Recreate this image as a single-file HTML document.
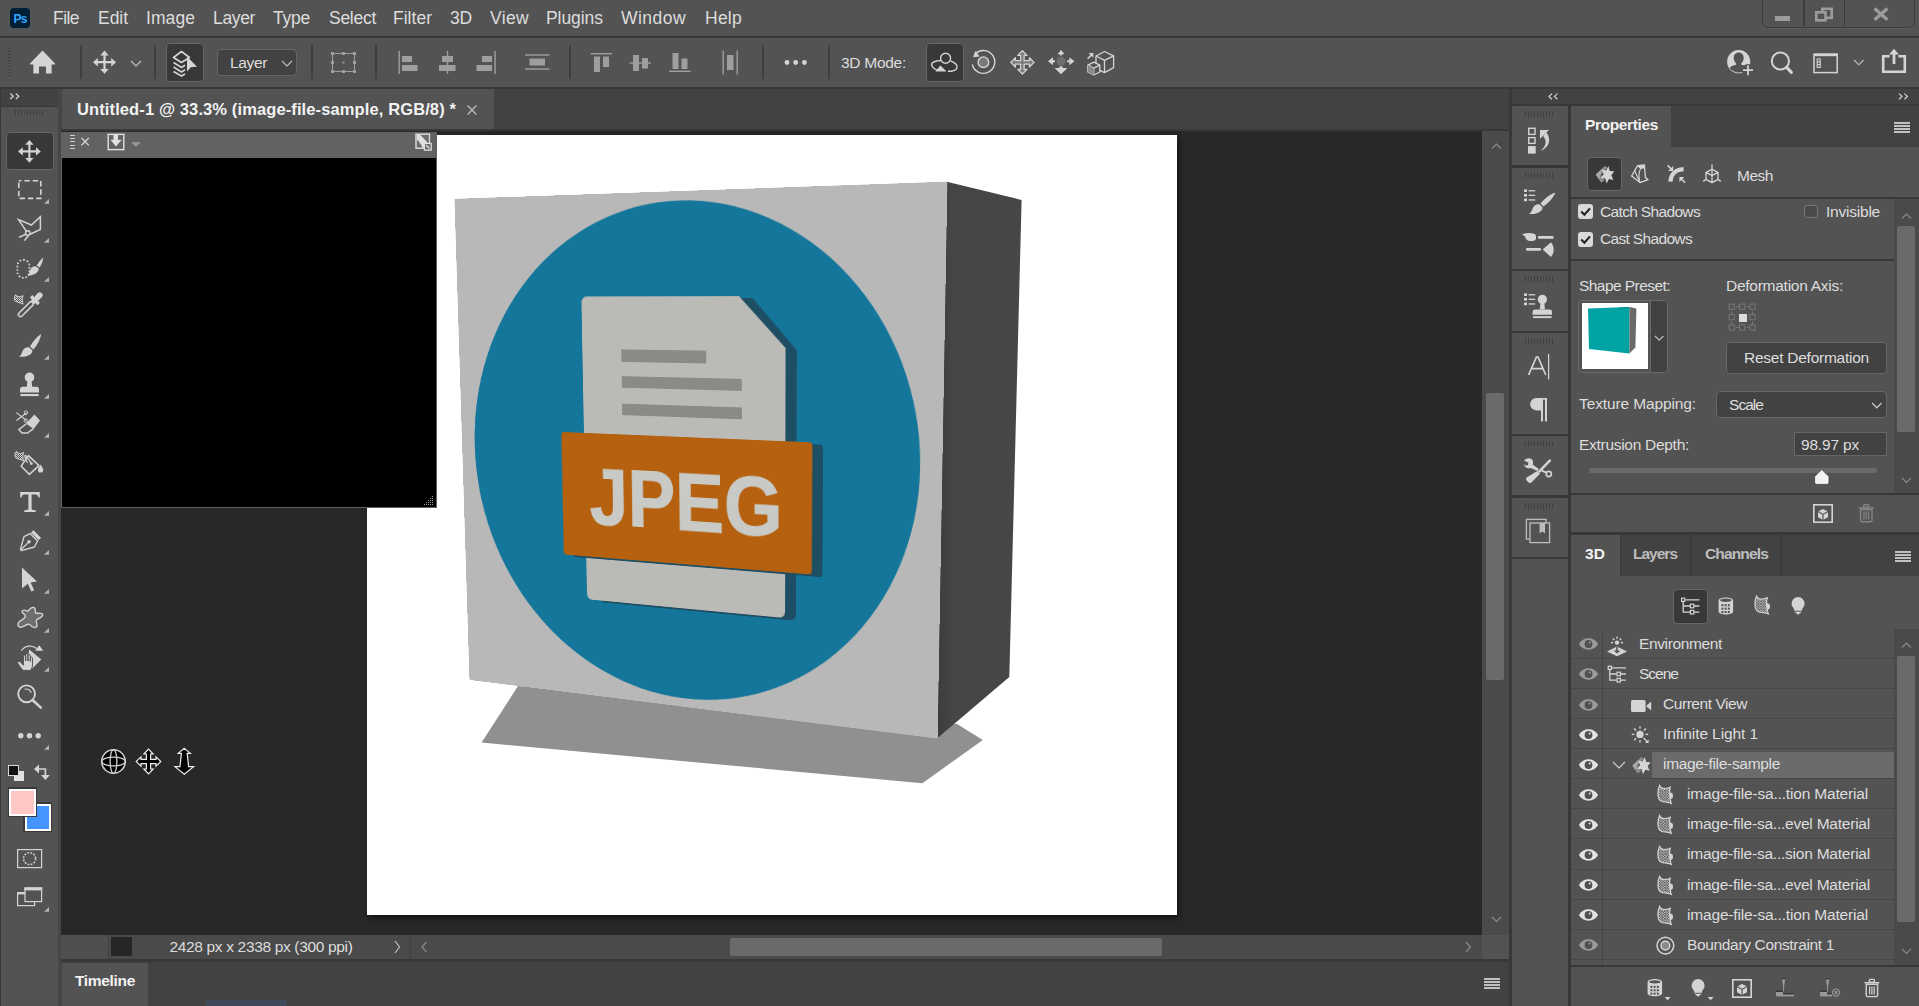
<!DOCTYPE html>
<html lang="en"><head><meta charset="utf-8"><title>Untitled-1 @ 33.3% (image-file-sample, RGB/8) *</title>
<style>
html,body{margin:0;padding:0;background:#535353;overflow:hidden;}
#app{position:relative;width:1919px;height:1006px;overflow:hidden;background:#535353;font-family:"Liberation Sans", sans-serif;}
#app div,#app svg,#app .t{position:absolute;}
#app .t{white-space:pre;}
</style></head><body><div id="app">
<div style="left:0px;top:0px;width:1919px;height:36px;background:#535353;"></div>
<div style="left:0px;top:36px;width:1919px;height:2px;background:#383838;"></div>
<div style="left:10px;top:8px;width:20px;height:20px;background:#001e36;border-radius:4px;"></div>
<span id="t0" class="t" style="left:13.5px;top:12.84px;font-size:12px;line-height:12px;color:#31a8ff;font-weight:700;letter-spacing:-0.844px;">Ps</span>
<span id="t1" class="t" style="left:53px;top:10.19px;font-size:17.5px;line-height:17.5px;color:#dddddd;font-weight:400;letter-spacing:-0.551px;">File</span>
<span id="t2" class="t" style="left:98px;top:10.19px;font-size:17.5px;line-height:17.5px;color:#dddddd;font-weight:400;letter-spacing:-0.039px;">Edit</span>
<span id="t3" class="t" style="left:146px;top:10.19px;font-size:17.5px;line-height:17.5px;color:#dddddd;font-weight:400;letter-spacing:0.072px;">Image</span>
<span id="t4" class="t" style="left:213px;top:10.19px;font-size:17.5px;line-height:17.5px;color:#dddddd;font-weight:400;letter-spacing:-0.356px;">Layer</span>
<span id="t5" class="t" style="left:273px;top:10.19px;font-size:17.5px;line-height:17.5px;color:#dddddd;font-weight:400;letter-spacing:-0.238px;">Type</span>
<span id="t6" class="t" style="left:329px;top:10.19px;font-size:17.5px;line-height:17.5px;color:#dddddd;font-weight:400;letter-spacing:-0.273px;">Select</span>
<span id="t7" class="t" style="left:393px;top:10.19px;font-size:17.5px;line-height:17.5px;color:#dddddd;font-weight:400;letter-spacing:0.018px;">Filter</span>
<span id="t8" class="t" style="left:450px;top:10.19px;font-size:17.5px;line-height:17.5px;color:#dddddd;font-weight:400;letter-spacing:-0.188px;">3D</span>
<span id="t9" class="t" style="left:490px;top:10.19px;font-size:17.5px;line-height:17.5px;color:#dddddd;font-weight:400;letter-spacing:0.344px;">View</span>
<span id="t10" class="t" style="left:546px;top:10.19px;font-size:17.5px;line-height:17.5px;color:#dddddd;font-weight:400;letter-spacing:-0.058px;">Plugins</span>
<span id="t11" class="t" style="left:621px;top:10.19px;font-size:17.5px;line-height:17.5px;color:#dddddd;font-weight:400;letter-spacing:0.458px;">Window</span>
<span id="t12" class="t" style="left:705px;top:10.19px;font-size:17.5px;line-height:17.5px;color:#dddddd;font-weight:400;letter-spacing:0.250px;">Help</span>
<div style="left:1761.5px;top:-3px;width:153.5px;height:30.5px;background:#535353;border:1.5px solid #3c3c3c;border-radius:0 0 6px 6px;box-sizing:border-box;box-shadow:0 1px 0 #5c5c5c;"></div>
<div style="left:1803px;top:0px;width:1.5px;height:26px;background:#3c3c3c;"></div>
<div style="left:1843.5px;top:0px;width:1.5px;height:26px;background:#3c3c3c;"></div>
<div style="left:1775px;top:16px;width:15.2px;height:5px;background:#9c9c9c;"></div>
<svg style="left:1813px;top:5px;" width="22" height="18" viewBox="0 0 22 18"><rect x="9.3" y="3.8" width="9.4" height="9" fill="none" stroke="#9c9c9c" stroke-width="2.6"/><rect x="3.3" y="7.3" width="9.2" height="8" fill="#535353" stroke="#9c9c9c" stroke-width="2.6"/></svg>
<svg style="left:1871px;top:5px;" width="20" height="18" viewBox="0 0 20 18"><path d="M3.6 3.4 L16.4 14.8 M16.4 3.4 L3.6 14.8" stroke="#9c9c9c" stroke-width="3.3" fill="none"/></svg>
<div style="left:0px;top:38px;width:1919px;height:49px;background:#535353;"></div>
<div style="left:0px;top:87px;width:1919px;height:2px;background:#383838;"></div>
<div style="left:8px;top:48px;width:3px;height:1px;background:#444444;"></div>
<div style="left:8px;top:51px;width:3px;height:1px;background:#444444;"></div>
<div style="left:8px;top:54px;width:3px;height:1px;background:#444444;"></div>
<div style="left:8px;top:57px;width:3px;height:1px;background:#444444;"></div>
<div style="left:8px;top:60px;width:3px;height:1px;background:#444444;"></div>
<div style="left:8px;top:63px;width:3px;height:1px;background:#444444;"></div>
<div style="left:8px;top:66px;width:3px;height:1px;background:#444444;"></div>
<div style="left:8px;top:69px;width:3px;height:1px;background:#444444;"></div>
<div style="left:8px;top:72px;width:3px;height:1px;background:#444444;"></div>
<div style="left:8px;top:75px;width:3px;height:1px;background:#444444;"></div>
<div style="left:80px;top:45px;width:2px;height:34px;background:#3e3e3e;"></div>
<div style="left:154px;top:45px;width:2px;height:34px;background:#3e3e3e;"></div>
<div style="left:311px;top:45px;width:2px;height:34px;background:#3e3e3e;"></div>
<div style="left:375px;top:45px;width:2px;height:34px;background:#3e3e3e;"></div>
<div style="left:569px;top:45px;width:2px;height:34px;background:#3e3e3e;"></div>
<div style="left:762px;top:45px;width:2px;height:34px;background:#3e3e3e;"></div>
<div style="left:828px;top:45px;width:2px;height:34px;background:#3e3e3e;"></div>
<div style="left:166px;top:43px;width:38px;height:39px;background:#383838;border:1px solid #666;border-radius:4px;box-sizing:border-box;"></div>
<div style="left:217px;top:49px;width:80px;height:27px;background:#424242;border:1px solid #666;border-radius:4px;box-sizing:border-box;"></div>
<span id="t13" class="t" style="left:230px;top:54.88px;font-size:15.5px;line-height:15.5px;color:#dddddd;font-weight:400;letter-spacing:-0.356px;">Layer</span>
<span id="t14" class="t" style="left:841px;top:54.88px;font-size:15.5px;line-height:15.5px;color:#dddddd;font-weight:400;letter-spacing:-0.275px;">3D Mode:</span>
<div style="left:926px;top:43px;width:38px;height:39px;background:#383838;border:1px solid #666;border-radius:4px;box-sizing:border-box;"></div>
<div style="left:0px;top:89px;width:61px;height:917px;background:#383838;"></div>
<div style="left:58px;top:89px;width:3px;height:917px;background:#474747;"></div>
<div style="left:1px;top:89px;width:57px;height:17px;background:#424242;"></div>
<div style="left:1px;top:107px;width:57px;height:899px;background:#535353;"></div>
<div style="left:15px;top:110px;width:1px;height:5.4px;background:#404040;"></div>
<div style="left:18px;top:110px;width:1px;height:5.4px;background:#404040;"></div>
<div style="left:21px;top:110px;width:1px;height:5.4px;background:#404040;"></div>
<div style="left:24px;top:110px;width:1px;height:5.4px;background:#404040;"></div>
<div style="left:27px;top:110px;width:1px;height:5.4px;background:#404040;"></div>
<div style="left:30px;top:110px;width:1px;height:5.4px;background:#404040;"></div>
<div style="left:33px;top:110px;width:1px;height:5.4px;background:#404040;"></div>
<div style="left:36px;top:110px;width:1px;height:5.4px;background:#404040;"></div>
<div style="left:39px;top:110px;width:1px;height:5.4px;background:#404040;"></div>
<div style="left:42px;top:110px;width:1px;height:5.4px;background:#404040;"></div>
<div style="left:6px;top:132px;width:48px;height:38px;background:#383838;border:1px solid #666;border-radius:4px;box-sizing:border-box;"></div>
<div style="left:61px;top:89px;width:1448px;height:42px;background:#424242;"></div>
<div style="left:61px;top:129px;width:1448px;height:2px;background:#383838;"></div>
<div style="left:62px;top:89px;width:432px;height:40px;background:#535353;"></div>
<span id="t15" class="t" style="left:77px;top:101.23px;font-size:16.5px;line-height:16.5px;color:#f2f2f2;font-weight:700;letter-spacing:0.113px;">Untitled-1 @ 33.3% (image-file-sample, RGB/8) *</span>
<div style="left:61px;top:131px;width:1421px;height:804px;background:#282828;"></div>
<div style="left:367px;top:135px;width:810px;height:780px;background:#ffffff;box-shadow:2px 3px 6px rgba(0,0,0,.55);"></div>
<div style="left:1482px;top:131px;width:27px;height:804px;background:#4a4a4a;"></div>
<div style="left:1486px;top:393px;width:18px;height:287px;background:#6a6a6a;border-radius:2px;"></div>
<div style="left:61px;top:935px;width:1448px;height:24px;background:#4a4a4a;"></div>
<div style="left:61px;top:935px;width:47px;height:24px;background:#4f4f4f;"></div>
<div style="left:108px;top:935px;width:1px;height:24px;background:#424242;"></div>
<div style="left:111px;top:937px;width:21px;height:19px;background:#262626;"></div>
<span id="t16" class="t" style="left:169.5px;top:938.88px;font-size:15.5px;line-height:15.5px;color:#dddddd;font-weight:400;letter-spacing:-0.340px;">2428 px x 2338 px (300 ppi)</span>
<div style="left:410px;top:935px;width:1px;height:24px;background:#424242;"></div>
<div style="left:730px;top:938px;width:432px;height:18px;background:#6a6a6a;border-radius:2px;"></div>
<div style="left:1482px;top:935px;width:27px;height:24px;background:#535353;"></div>
<div style="left:61px;top:959px;width:1448px;height:3px;background:#383838;"></div>
<div style="left:61px;top:962px;width:1448px;height:44px;background:#424242;"></div>
<div style="left:62px;top:963px;width:86px;height:43px;background:#535353;"></div>
<span id="t17" class="t" style="left:75px;top:972.88px;font-size:15.5px;line-height:15.5px;color:#f2f2f2;font-weight:700;letter-spacing:-0.326px;">Timeline</span>
<div style="left:206px;top:1000px;width:81px;height:6px;background:#3f4a5a;"></div>
<div style="left:1484px;top:978px;width:16px;height:2px;background:#c0c0c0;"></div>
<div style="left:1484px;top:981px;width:16px;height:2px;background:#c0c0c0;"></div>
<div style="left:1484px;top:984px;width:16px;height:2px;background:#c0c0c0;"></div>
<div style="left:1484px;top:987px;width:16px;height:2px;background:#c0c0c0;"></div>
<div style="left:61px;top:131.5px;width:376px;height:376.5px;background:#626262;"></div>
<div style="left:62px;top:157.5px;width:374px;height:349.5px;background:#000000;"></div>
<div style="left:1509px;top:89px;width:3px;height:917px;background:#383838;"></div>
<div style="left:1512px;top:89px;width:407px;height:15px;background:#424242;"></div>
<div style="left:1512px;top:104px;width:407px;height:2px;background:#383838;"></div>
<div style="left:1512px;top:106px;width:56px;height:900px;background:#535353;"></div>
<div style="left:1512px;top:165.4px;width:56px;height:2.4000000000000057px;background:#383838;"></div>
<div style="left:1512px;top:269px;width:56px;height:2.1999999999999886px;background:#383838;"></div>
<div style="left:1512px;top:331px;width:56px;height:2.1999999999999886px;background:#383838;"></div>
<div style="left:1512px;top:434.2px;width:56px;height:2.1999999999999886px;background:#383838;"></div>
<div style="left:1512px;top:495.4px;width:56px;height:2.2000000000000455px;background:#383838;"></div>
<div style="left:1512px;top:557px;width:56px;height:2.2000000000000455px;background:#383838;"></div>
<div style="left:1525px;top:111.2px;width:1px;height:5.4px;background:#404040;"></div>
<div style="left:1528px;top:111.2px;width:1px;height:5.4px;background:#404040;"></div>
<div style="left:1531px;top:111.2px;width:1px;height:5.4px;background:#404040;"></div>
<div style="left:1534px;top:111.2px;width:1px;height:5.4px;background:#404040;"></div>
<div style="left:1537px;top:111.2px;width:1px;height:5.4px;background:#404040;"></div>
<div style="left:1540px;top:111.2px;width:1px;height:5.4px;background:#404040;"></div>
<div style="left:1543px;top:111.2px;width:1px;height:5.4px;background:#404040;"></div>
<div style="left:1546px;top:111.2px;width:1px;height:5.4px;background:#404040;"></div>
<div style="left:1549px;top:111.2px;width:1px;height:5.4px;background:#404040;"></div>
<div style="left:1552px;top:111.2px;width:1px;height:5.4px;background:#404040;"></div>
<div style="left:1525px;top:173px;width:1px;height:5.4px;background:#404040;"></div>
<div style="left:1528px;top:173px;width:1px;height:5.4px;background:#404040;"></div>
<div style="left:1531px;top:173px;width:1px;height:5.4px;background:#404040;"></div>
<div style="left:1534px;top:173px;width:1px;height:5.4px;background:#404040;"></div>
<div style="left:1537px;top:173px;width:1px;height:5.4px;background:#404040;"></div>
<div style="left:1540px;top:173px;width:1px;height:5.4px;background:#404040;"></div>
<div style="left:1543px;top:173px;width:1px;height:5.4px;background:#404040;"></div>
<div style="left:1546px;top:173px;width:1px;height:5.4px;background:#404040;"></div>
<div style="left:1549px;top:173px;width:1px;height:5.4px;background:#404040;"></div>
<div style="left:1552px;top:173px;width:1px;height:5.4px;background:#404040;"></div>
<div style="left:1525px;top:276.2px;width:1px;height:5.4px;background:#404040;"></div>
<div style="left:1528px;top:276.2px;width:1px;height:5.4px;background:#404040;"></div>
<div style="left:1531px;top:276.2px;width:1px;height:5.4px;background:#404040;"></div>
<div style="left:1534px;top:276.2px;width:1px;height:5.4px;background:#404040;"></div>
<div style="left:1537px;top:276.2px;width:1px;height:5.4px;background:#404040;"></div>
<div style="left:1540px;top:276.2px;width:1px;height:5.4px;background:#404040;"></div>
<div style="left:1543px;top:276.2px;width:1px;height:5.4px;background:#404040;"></div>
<div style="left:1546px;top:276.2px;width:1px;height:5.4px;background:#404040;"></div>
<div style="left:1549px;top:276.2px;width:1px;height:5.4px;background:#404040;"></div>
<div style="left:1552px;top:276.2px;width:1px;height:5.4px;background:#404040;"></div>
<div style="left:1525px;top:338.4px;width:1px;height:5.4px;background:#404040;"></div>
<div style="left:1528px;top:338.4px;width:1px;height:5.4px;background:#404040;"></div>
<div style="left:1531px;top:338.4px;width:1px;height:5.4px;background:#404040;"></div>
<div style="left:1534px;top:338.4px;width:1px;height:5.4px;background:#404040;"></div>
<div style="left:1537px;top:338.4px;width:1px;height:5.4px;background:#404040;"></div>
<div style="left:1540px;top:338.4px;width:1px;height:5.4px;background:#404040;"></div>
<div style="left:1543px;top:338.4px;width:1px;height:5.4px;background:#404040;"></div>
<div style="left:1546px;top:338.4px;width:1px;height:5.4px;background:#404040;"></div>
<div style="left:1549px;top:338.4px;width:1px;height:5.4px;background:#404040;"></div>
<div style="left:1552px;top:338.4px;width:1px;height:5.4px;background:#404040;"></div>
<div style="left:1525px;top:441px;width:1px;height:5.4px;background:#404040;"></div>
<div style="left:1528px;top:441px;width:1px;height:5.4px;background:#404040;"></div>
<div style="left:1531px;top:441px;width:1px;height:5.4px;background:#404040;"></div>
<div style="left:1534px;top:441px;width:1px;height:5.4px;background:#404040;"></div>
<div style="left:1537px;top:441px;width:1px;height:5.4px;background:#404040;"></div>
<div style="left:1540px;top:441px;width:1px;height:5.4px;background:#404040;"></div>
<div style="left:1543px;top:441px;width:1px;height:5.4px;background:#404040;"></div>
<div style="left:1546px;top:441px;width:1px;height:5.4px;background:#404040;"></div>
<div style="left:1549px;top:441px;width:1px;height:5.4px;background:#404040;"></div>
<div style="left:1552px;top:441px;width:1px;height:5.4px;background:#404040;"></div>
<div style="left:1525px;top:503.2px;width:1px;height:5.4px;background:#404040;"></div>
<div style="left:1528px;top:503.2px;width:1px;height:5.4px;background:#404040;"></div>
<div style="left:1531px;top:503.2px;width:1px;height:5.4px;background:#404040;"></div>
<div style="left:1534px;top:503.2px;width:1px;height:5.4px;background:#404040;"></div>
<div style="left:1537px;top:503.2px;width:1px;height:5.4px;background:#404040;"></div>
<div style="left:1540px;top:503.2px;width:1px;height:5.4px;background:#404040;"></div>
<div style="left:1543px;top:503.2px;width:1px;height:5.4px;background:#404040;"></div>
<div style="left:1546px;top:503.2px;width:1px;height:5.4px;background:#404040;"></div>
<div style="left:1549px;top:503.2px;width:1px;height:5.4px;background:#404040;"></div>
<div style="left:1552px;top:503.2px;width:1px;height:5.4px;background:#404040;"></div>
<div style="left:1568px;top:104px;width:3px;height:902px;background:#383838;"></div>
<div style="left:1571px;top:106px;width:348px;height:426px;background:#535353;"></div>
<div style="left:1571px;top:106px;width:348px;height:41px;background:#424242;"></div>
<div style="left:1571px;top:106px;width:100px;height:43px;background:#535353;"></div>
<span id="t18" class="t" style="left:1585px;top:116.88px;font-size:15.5px;line-height:15.5px;color:#f2f2f2;font-weight:700;letter-spacing:-0.367px;">Properties</span>
<div style="left:1894px;top:122px;width:16px;height:2px;background:#c0c0c0;"></div>
<div style="left:1894px;top:125px;width:16px;height:2px;background:#c0c0c0;"></div>
<div style="left:1894px;top:128px;width:16px;height:2px;background:#c0c0c0;"></div>
<div style="left:1894px;top:131px;width:16px;height:2px;background:#c0c0c0;"></div>
<div style="left:1587px;top:157px;width:35px;height:34px;background:#383838;border:1px solid #666;border-radius:4px;box-sizing:border-box;"></div>
<span id="t19" class="t" style="left:1737px;top:167.88px;font-size:15.5px;line-height:15.5px;color:#dddddd;font-weight:400;letter-spacing:-0.477px;">Mesh</span>
<div style="left:1571px;top:197px;width:348px;height:2px;background:#383838;"></div>
<div style="left:1894px;top:199px;width:25px;height:295px;background:#4a4a4a;"></div>
<div style="left:1897px;top:226px;width:18px;height:206px;background:#6a6a6a;border-radius:2px;"></div>
<div style="left:1578px;top:204px;width:15px;height:15px;background:#d9d9d9;border-radius:3px;"></div>
<div style="left:1578px;top:232px;width:15px;height:15px;background:#d9d9d9;border-radius:3px;"></div>
<span id="t20" class="t" style="left:1600px;top:203.88px;font-size:15.5px;line-height:15.5px;color:#dddddd;font-weight:400;letter-spacing:-0.659px;">Catch Shadows</span>
<span id="t21" class="t" style="left:1600px;top:230.88px;font-size:15.5px;line-height:15.5px;color:#dddddd;font-weight:400;letter-spacing:-0.663px;">Cast Shadows</span>
<div style="left:1804px;top:205px;width:14px;height:13px;background:#4a4a4a;border:1px solid #777;border-radius:3px;box-sizing:border-box;"></div>
<span id="t22" class="t" style="left:1826px;top:203.88px;font-size:15.5px;line-height:15.5px;color:#dddddd;font-weight:400;letter-spacing:-0.222px;">Invisible</span>
<div style="left:1571px;top:259px;width:323px;height:2px;background:#383838;"></div>
<span id="t23" class="t" style="left:1579px;top:277.88px;font-size:15.5px;line-height:15.5px;color:#dddddd;font-weight:400;letter-spacing:-0.556px;">Shape Preset:</span>
<span id="t24" class="t" style="left:1726px;top:277.88px;font-size:15.5px;line-height:15.5px;color:#dddddd;font-weight:400;letter-spacing:-0.263px;">Deformation Axis:</span>
<div style="left:1578.4px;top:300.4px;width:90px;height:73px;background:#535353;border:1px solid #686868;border-radius:4px;box-sizing:border-box;"></div>
<div style="left:1651.4px;top:301.4px;width:16px;height:71px;background:#424242;border-radius:0 3px 3px 0;"></div>
<div style="left:1582px;top:303px;width:66px;height:66px;background:#ffffff;"></div>
<div style="left:1650.4px;top:301.4px;width:1px;height:71px;background:#686868;"></div>
<div style="left:1726px;top:342px;width:161px;height:32px;background:#424242;border:1px solid #666;border-radius:4px;box-sizing:border-box;"></div>
<span id="t25" class="t" style="left:1744px;top:349.88px;font-size:15.5px;line-height:15.5px;color:#dddddd;font-weight:400;letter-spacing:-0.249px;">Reset Deformation</span>
<span id="t26" class="t" style="left:1579px;top:395.88px;font-size:15.5px;line-height:15.5px;color:#dddddd;font-weight:400;letter-spacing:-0.119px;">Texture Mapping:</span>
<div style="left:1716px;top:391px;width:171px;height:27px;background:#424242;border:1px solid #666;border-radius:4px;box-sizing:border-box;"></div>
<span id="t27" class="t" style="left:1729px;top:396.88px;font-size:15.5px;line-height:15.5px;color:#dddddd;font-weight:400;letter-spacing:-0.956px;">Scale</span>
<span id="t28" class="t" style="left:1579px;top:436.88px;font-size:15.5px;line-height:15.5px;color:#dddddd;font-weight:400;letter-spacing:-0.287px;">Extrusion Depth:</span>
<div style="left:1794px;top:432px;width:93px;height:24px;background:#424242;border:1px solid #666;box-sizing:border-box;"></div>
<span id="t29" class="t" style="left:1801px;top:436.88px;font-size:15.5px;line-height:15.5px;color:#dddddd;font-weight:400;letter-spacing:-0.184px;">98.97 px</span>
<div style="left:1589px;top:468px;width:288px;height:5px;background:#6a6a6a;border-radius:2px;"></div>
<div style="left:1571px;top:493px;width:348px;height:2px;background:#383838;"></div>
<div style="left:1571px;top:532px;width:348px;height:3px;background:#383838;"></div>
<div style="left:1571px;top:535px;width:348px;height:431px;background:#535353;"></div>
<div style="left:1571px;top:535px;width:348px;height:41px;background:#424242;"></div>
<div style="left:1571px;top:535px;width:49px;height:43px;background:#535353;"></div>
<div style="left:1690px;top:535px;width:1px;height:41px;background:#383838;"></div>
<div style="left:1781px;top:535px;width:1px;height:41px;background:#383838;"></div>
<div style="left:1620px;top:535px;width:1px;height:41px;background:#383838;"></div>
<span id="t30" class="t" style="left:1585px;top:545.88px;font-size:15.5px;line-height:15.5px;color:#f2f2f2;font-weight:700;letter-spacing:0.086px;">3D</span>
<span id="t31" class="t" style="left:1633px;top:545.88px;font-size:15.5px;line-height:15.5px;color:#bdbdbd;font-weight:700;letter-spacing:-0.997px;">Layers</span>
<span id="t32" class="t" style="left:1705px;top:545.88px;font-size:15.5px;line-height:15.5px;color:#bdbdbd;font-weight:700;letter-spacing:-0.846px;">Channels</span>
<div style="left:1895px;top:551px;width:16px;height:2px;background:#c0c0c0;"></div>
<div style="left:1895px;top:554px;width:16px;height:2px;background:#c0c0c0;"></div>
<div style="left:1895px;top:557px;width:16px;height:2px;background:#c0c0c0;"></div>
<div style="left:1895px;top:560px;width:16px;height:2px;background:#c0c0c0;"></div>
<div style="left:1673px;top:589px;width:35px;height:35px;background:#383838;border:1px solid #666;border-radius:4px;box-sizing:border-box;"></div>
<div style="left:1894px;top:629px;width:25px;height:337px;background:#4a4a4a;"></div>
<div style="left:1897px;top:656px;width:18px;height:266px;background:#6a6a6a;border-radius:2px;"></div>
<div style="left:1602px;top:629px;width:1px;height:337px;background:#454545;"></div>
<div style="left:1571px;top:658px;width:323px;height:1px;background:#474747;"></div>
<span id="t33" class="t" style="left:1639px;top:635.88px;font-size:15.5px;line-height:15.5px;color:#dddddd;font-weight:400;letter-spacing:-0.365px;">Environment</span>
<div style="left:1571px;top:688px;width:323px;height:1px;background:#474747;"></div>
<span id="t34" class="t" style="left:1639px;top:665.96px;font-size:15.5px;line-height:15.5px;color:#dddddd;font-weight:400;letter-spacing:-0.991px;">Scene</span>
<div style="left:1571px;top:718px;width:323px;height:1px;background:#474747;"></div>
<span id="t35" class="t" style="left:1663px;top:696.04px;font-size:15.5px;line-height:15.5px;color:#dddddd;font-weight:400;letter-spacing:-0.443px;">Current View</span>
<div style="left:1571px;top:748px;width:323px;height:1px;background:#474747;"></div>
<span id="t36" class="t" style="left:1663px;top:726.12px;font-size:15.5px;line-height:15.5px;color:#dddddd;font-weight:400;letter-spacing:-0.095px;">Infinite Light 1</span>
<div style="left:1652px;top:751.92px;width:242px;height:25.6px;background:#6b6b6b;"></div>
<div style="left:1571px;top:778px;width:323px;height:1px;background:#474747;"></div>
<span id="t37" class="t" style="left:1663px;top:756.20px;font-size:15.5px;line-height:15.5px;color:#dddddd;font-weight:400;letter-spacing:-0.313px;">image-file-sample</span>
<div style="left:1571px;top:808px;width:323px;height:1px;background:#474747;"></div>
<span id="t38" class="t" style="left:1687px;top:786.28px;font-size:15.5px;line-height:15.5px;color:#dddddd;font-weight:400;letter-spacing:-0.175px;">image-file-sa...tion Material</span>
<div style="left:1571px;top:838px;width:323px;height:1px;background:#474747;"></div>
<span id="t39" class="t" style="left:1687px;top:816.36px;font-size:15.5px;line-height:15.5px;color:#dddddd;font-weight:400;letter-spacing:-0.225px;">image-file-sa...evel Material</span>
<div style="left:1571px;top:869px;width:323px;height:1px;background:#474747;"></div>
<span id="t40" class="t" style="left:1687px;top:846.44px;font-size:15.5px;line-height:15.5px;color:#dddddd;font-weight:400;letter-spacing:-0.225px;">image-file-sa...sion Material</span>
<div style="left:1571px;top:899px;width:323px;height:1px;background:#474747;"></div>
<span id="t41" class="t" style="left:1687px;top:876.52px;font-size:15.5px;line-height:15.5px;color:#dddddd;font-weight:400;letter-spacing:-0.225px;">image-file-sa...evel Material</span>
<div style="left:1571px;top:929px;width:323px;height:1px;background:#474747;"></div>
<span id="t42" class="t" style="left:1687px;top:906.60px;font-size:15.5px;line-height:15.5px;color:#dddddd;font-weight:400;letter-spacing:-0.175px;">image-file-sa...tion Material</span>
<div style="left:1571px;top:959px;width:323px;height:1px;background:#474747;"></div>
<span id="t43" class="t" style="left:1687px;top:936.68px;font-size:15.5px;line-height:15.5px;color:#dddddd;font-weight:400;letter-spacing:-0.344px;">Boundary Constraint 1</span>
<div style="left:1571px;top:965px;width:348px;height:2px;background:#383838;"></div>
<div style="left:1571px;top:967px;width:348px;height:39px;background:#535353;"></div>
<svg style="left:367px;top:135px;" width="810" height="780" viewBox="367 135 810 780"><polygon points="518,686 481.6,742.6 922.4,783.2 982.8,740 957,724" fill="#909090"/><defs><linearGradient id="sg" x1="0" x2="1" y1="0" y2="0"><stop offset="0" stop-color="#3c3c3c"/><stop offset="0.18" stop-color="#454545"/><stop offset="1" stop-color="#474747"/></linearGradient></defs><polygon points="946.8,181.8 1021.6,200 1009.3,677 937,738.6" fill="url(#sg)"/><polygon points="454.6,199 947.3,181.8 937.5,738.5 469.6,679.8" fill="#b8b8b8"/></svg>
<div style="left:0;top:0;width:600px;height:578px;transform-origin:0 0;transform:matrix3d(0.597580,-0.071576,0,-0.00023603,0.066604,0.890683,0,0.00008657,0,0,1,0,454.600,199.000,0,1);overflow:hidden;"><svg width="600" height="578" viewBox="0 0 600 578" style="position:absolute;left:0;top:0"><rect width="600" height="578" fill="#b8b8b8"/><circle cx="297" cy="289" r="279" fill="#13769a"/><path d="M190 115 H384 L436 170 V458 a7 7 0 0 1 -7 7 H190 Z" fill="#1e4e64"/><path d="M177 113 H368 L423 168 V456 a7 7 0 0 1 -7 7 H177 a7 7 0 0 1 -7 -7 V120 a7 7 0 0 1 7 -7 Z" fill="#babab6"/><rect x="221" y="172" width="107" height="14" fill="#8a8a86"/><rect x="221" y="202" width="150" height="13" fill="#8a8a86"/><rect x="221" y="233" width="150" height="13" fill="#8a8a86"/><rect x="152" y="270" width="315" height="144" rx="4" fill="#1e4e64"/><rect x="139.5" y="268" width="315" height="144" rx="4" fill="#b5610f"/><text x="298" y="373.5" text-anchor="middle" font-family="Liberation Sans, sans-serif" font-weight="700" font-size="93" textLength="244" stroke="#c9c9c5" stroke-width="1.2" lengthAdjust="spacingAndGlyphs" fill="#c9c9c5">JPEG</text></svg></div>
<div style="left:61px;top:131.5px;width:376px;height:376.5px;background:#626262;"></div>
<div style="left:62px;top:157.5px;width:374px;height:349.5px;background:#000000;"></div>
<svg style="left:28px;top:48px;" width="30" height="28" viewBox="28 48 30 28"><path d="M42.5 50.6 L55 63.4 V64.6 H51.6 V73.4 H46 V66.6 H39 V73.4 H33.4 V64.6 H30 V63.4 Z" fill="#d4d4d4"/></svg>
<svg style="left:90px;top:48px;" width="30" height="30" viewBox="90 48 30 30"><path d="M95.9 62.2 H113.1 M104.5 53.6 V70.8" stroke="#d4d4d4" stroke-width="2.2" fill="none"/><polygon points="116.1,62.2 111.2,66.5 111.2,57.900000000000006" fill="#d4d4d4"/><polygon points="92.9,62.2 97.8,57.900000000000006 97.8,66.5" fill="#d4d4d4"/><polygon points="104.5,73.8 100.2,68.9 108.8,68.9" fill="#d4d4d4"/><polygon points="104.5,50.6 108.8,55.5 100.2,55.5" fill="#d4d4d4"/></svg>
<svg style="left:129.0px;top:59.0px;" width="14" height="9" viewBox="129.0 59.0 14 9"><path d="M131.0 61.0 L136 66.0 L141.0 61.0" fill="none" stroke="#c0c0c0" stroke-width="1.15"/></svg>
<svg style="left:168px;top:46px;" width="34" height="34" viewBox="168 46 34 34"><g fill="none" stroke="#d4d4d4" stroke-width="1.6" stroke-linejoin="round"><path d="M173.5 57.5 L181.5 51.5 L189.5 57.5 L181.5 62.5 Z" stroke-dasharray="none"/><path d="M173.5 62.5 L181.5 67.5 L185 65.3"/><path d="M173.5 67 L181.5 72 L185 69.8"/><path d="M173.5 71.5 L181.5 76 L185 74"/></g><path d="M187 56.5 L197 66.8 L190.8 67.2 L187 71.5 Z" fill="#d4d4d4"/></svg>
<svg style="left:280.0px;top:59.0px;" width="14" height="9" viewBox="280.0 59.0 14 9"><path d="M282.0 61.0 L287 66.0 L292.0 61.0" fill="none" stroke="#c0c0c0" stroke-width="1.15"/></svg>
<svg style="left:329px;top:50px;" width="30" height="26" viewBox="329 50 30 26"><rect x="331" y="52" width="3" height="3" fill="#9e9e9e"/><rect x="331" y="61" width="3" height="3" fill="#9e9e9e"/><rect x="331" y="70" width="3" height="3" fill="#9e9e9e"/><rect x="342" y="52" width="3" height="3" fill="#9e9e9e"/><rect x="342.5" y="61.5" width="2" height="2" fill="#9e9e9e"/><rect x="342" y="70" width="3" height="3" fill="#9e9e9e"/><rect x="353" y="52" width="3" height="3" fill="#9e9e9e"/><rect x="353" y="61" width="3" height="3" fill="#9e9e9e"/><rect x="353" y="70" width="3" height="3" fill="#9e9e9e"/><rect x="332.5" y="53.5" width="22" height="18" fill="none" stroke="#9e9e9e" stroke-width="1"/></svg>
<svg style="left:396px;top:49px;" width="26" height="28" viewBox="396 49 26 28"><rect x="398.5" y="51" width="1.4" height="23" fill="#9e9e9e"/><rect x="402" y="56" width="10" height="6" fill="#9e9e9e"/><rect x="402" y="65" width="15.5" height="6" fill="#9e9e9e"/></svg>
<svg style="left:436px;top:49px;" width="24" height="28" viewBox="436 49 24 28"><rect x="446.8" y="51" width="1.4" height="23" fill="#9e9e9e"/><rect x="442" y="56" width="11" height="6" fill="#9e9e9e"/><rect x="439" y="65" width="16.5" height="6" fill="#9e9e9e"/></svg>
<svg style="left:474px;top:49px;" width="26" height="28" viewBox="474 49 26 28"><rect x="494.4" y="51" width="1.4" height="23" fill="#9e9e9e"/><rect x="482" y="56" width="10" height="6" fill="#9e9e9e"/><rect x="476.5" y="65" width="15.5" height="6" fill="#9e9e9e"/></svg>
<svg style="left:523px;top:51px;" width="30" height="22" viewBox="523 51 30 22"><rect x="525" y="54.3" width="24.5" height="1.4" fill="#9e9e9e"/><rect x="525" y="68.3" width="24.5" height="1.4" fill="#9e9e9e"/><rect x="529.5" y="58.5" width="15.5" height="7" fill="#9e9e9e"/></svg>
<svg style="left:588px;top:50px;" width="28" height="26" viewBox="588 50 28 26"><rect x="590.5" y="53" width="21.5" height="1.4" fill="#9e9e9e"/><rect x="594" y="56.5" width="6" height="15.5" fill="#9e9e9e"/><rect x="603" y="56.5" width="6" height="10.5" fill="#9e9e9e"/></svg>
<svg style="left:627px;top:50px;" width="28" height="26" viewBox="627 50 28 26"><rect x="629.5" y="62.3" width="21.5" height="1.4" fill="#9e9e9e"/><rect x="633" y="55" width="6" height="16" fill="#9e9e9e"/><rect x="642" y="58" width="6" height="10.5" fill="#9e9e9e"/></svg>
<svg style="left:666px;top:50px;" width="28" height="26" viewBox="666 50 28 26"><rect x="669" y="70.6" width="21.5" height="1.4" fill="#9e9e9e"/><rect x="672.5" y="53" width="6" height="16" fill="#9e9e9e"/><rect x="681.5" y="58.5" width="6" height="10.5" fill="#9e9e9e"/></svg>
<svg style="left:720px;top:48px;" width="22" height="30" viewBox="720 48 22 30"><rect x="722.5" y="50.5" width="1.4" height="24" fill="#9e9e9e"/><rect x="736.5" y="50.5" width="1.4" height="24" fill="#9e9e9e"/><rect x="727" y="55" width="6.5" height="15" fill="#9e9e9e"/></svg>
<svg style="left:782px;top:58px;" width="28" height="8" viewBox="782 58 28 8"><circle cx="787" cy="62.5" r="2.4" fill="#d4d4d4"/><circle cx="795.7" cy="62.5" r="2.4" fill="#d4d4d4"/><circle cx="804.4" cy="62.5" r="2.4" fill="#d4d4d4"/></svg>
<svg style="left:928px;top:46px;" width="34" height="32" viewBox="928 46 34 32"><circle cx="945.6" cy="58.3" r="5" fill="none" stroke="#d4d4d4" stroke-width="1.4"/><path d="M941 60.5 C934 60.5 930.5 63 932 66 C933 68 935.5 69.6 939 70.6" fill="none" stroke="#d4d4d4" stroke-width="1.4"/><path d="M950.3 60.8 C955.5 62.6 958.3 65.6 956.8 68.3 C955.6 70.4 952.4 71.3 948 71.3" fill="none" stroke="#d4d4d4" stroke-width="1.4"/><polygon points="935.3,71.6 946.6,71.6 940.4,65.4" fill="#d4d4d4"/></svg>
<svg style="left:969px;top:47px;" width="30" height="30" viewBox="969 47 30 30"><path d="M975.6 53.6 A11.4 11.4 0 1 1 972.3 64.5" fill="none" stroke="#d4d4d4" stroke-width="1.4"/><polygon points="973,57.2 979.6,56.4 975.4,51" fill="#d4d4d4"/><circle cx="983.4" cy="62.2" r="5.3" fill="#7a7a7a" stroke="#d4d4d4" stroke-width="1.4"/></svg>
<svg style="left:1008px;top:48px;" width="30" height="30" viewBox="1008 48 30 30"><polygon points="1020.7,60.7 1020.7,55.4 1017.8,55.4 1022.4,50.8 1027.0,55.4 1024.1,55.4 1024.1,60.7 1029.4,60.7 1029.4,57.8 1034.0,62.4 1029.4,67.0 1029.4,64.1 1024.1,64.1 1024.1,69.4 1027.0,69.4 1022.4,74.0 1017.8,69.4 1020.7,69.4 1020.7,64.1 1015.4,64.1 1015.4,67.0 1010.8,62.4 1015.4,57.8 1015.4,60.7" fill="#7a7a7a" stroke="#d4d4d4" stroke-width="1.3" stroke-linejoin="round"/></svg>
<svg style="left:1046px;top:48px;" width="32" height="30" viewBox="1046 48 32 30"><circle cx="1061" cy="61.2" r="4.6" fill="#6e6e6e"/><path d="M1061 55.5 V53 M1055 61.2 H1052 M1067 61.2 H1070" stroke="#d4d4d4" stroke-width="2" fill="none"/><polygon points="1061,50 1064.6,54.2 1057.4,54.2" fill="#d4d4d4"/><polygon points="1048,61.2 1053,57.2 1053,65.2" fill="#d4d4d4"/><polygon points="1074.4,61.2 1069.4,57.2 1069.4,65.2" fill="#d4d4d4"/><path d="M1061 66.5 V69" stroke="#d4d4d4" stroke-width="3.4" fill="none"/><polygon points="1061,74.2 1054.6,68 1067.4,68" fill="#d4d4d4"/></svg>
<svg style="left:1085px;top:48px;" width="32" height="30" viewBox="1085 48 32 30"><g fill="none" stroke="#d4d4d4" stroke-width="1.3" stroke-linejoin="round"><path d="M1104.5 51.5 L1113.6 55.8 V67.6 L1104.5 72.6 L1096 68.4 V56 Z"/><path d="M1096 56 L1104.5 60.4 L1113.6 55.8 M1104.5 60.4 V72.6"/><path d="M1093.8 62.2 L1099.8 65.2 V72 L1093.8 75 L1087.8 72 V65.2 Z" fill="#535353"/><path d="M1087.8 65.2 L1093.8 68.2 L1099.8 65.2 M1093.8 68.2 V75"/></g><path d="M1087.8 65.2 L1093.8 68.2 V75 L1087.8 72 Z" fill="#8a8a8a"/><path d="M1087.6 58.8 L1092 54.4" stroke="#d4d4d4" stroke-width="1.5"/><polygon points="1088.6,53 1093.4,53 1093.4,57.8" fill="#d4d4d4"/></svg>
<svg style="left:1725px;top:48px;" width="30" height="29" viewBox="1725 48 30 29"><circle cx="1738.7" cy="61.7" r="11.6" fill="#d4d4d4"/><path d="M1738.7 52.4 c3 0 5 2.3 5 5.4 c0 2.4 -1 4.4 -2.4 5.4 v1.6 c2.6 0.8 5.6 1.6 6.6 3.2 a11.6 11.6 0 0 1 -18.4 0 c1 -1.6 4 -2.4 6.6 -3.2 v-1.6 c-1.4 -1 -2.4 -3 -2.4 -5.4 c0 -3.1 2 -5.4 5 -5.4 Z" fill="#535353"/><circle cx="1748" cy="70.2" r="6.2" fill="#535353"/><path d="M1743 70.2 H1753 M1748 65.2 V75.2" stroke="#d4d4d4" stroke-width="1.8"/></svg>
<svg style="left:1768px;top:49px;" width="28" height="28" viewBox="1768 49 28 28"><circle cx="1780.4" cy="61" r="8.6" fill="none" stroke="#d4d4d4" stroke-width="2"/><path d="M1786.6 67.4 L1791.4 72.4" stroke="#d4d4d4" stroke-width="3" stroke-linecap="round"/></svg>
<svg style="left:1811px;top:51px;" width="30" height="25" viewBox="1811 51 30 25"><rect x="1814" y="54.2" width="23.2" height="18.4" fill="none" stroke="#d4d4d4" stroke-width="1.5"/><rect x="1814" y="53.6" width="23.2" height="2.6" fill="#d4d4d4"/><rect x="1816.6" y="58.4" width="4.2" height="9.6" fill="#d4d4d4"/><rect x="1817.8" y="59.4" width="1.8" height="1.8" fill="#535353"/><rect x="1817.8" y="62.3" width="1.8" height="1.8" fill="#535353"/><rect x="1817.8" y="65.2" width="1.8" height="1.8" fill="#535353"/></svg>
<svg style="left:1852.4px;top:58.300000000000004px;" width="13.6" height="8.8" viewBox="1852.4 58.300000000000004 13.6 8.8"><path d="M1854.4 60.300000000000004 L1859.2 65.10000000000001 L1864.0 60.300000000000004" fill="none" stroke="#c0c0c0" stroke-width="1.15"/></svg>
<svg style="left:1879px;top:47px;" width="30" height="29" viewBox="1879 47 30 29"><path d="M1889.6 56.2 H1883.2 V71.8 H1904.8 V56.2 H1898.4" fill="none" stroke="#d4d4d4" stroke-width="2.6"/><path d="M1894 54 V64" stroke="#d4d4d4" stroke-width="2.8"/><polygon points="1894,48.8 1899,54.6 1889,54.6" fill="#d4d4d4"/></svg>
<svg style="left:8px;top:92px;" width="14" height="10" viewBox="8 92 14 10"><path d="M10.3 93.5 L13.3 96.2 L10.3 99 M15.8 93.5 L18.8 96.2 L15.8 99" fill="none" stroke="#d4d4d4" stroke-width="1.2"/></svg>
<svg style="left:15px;top:137px;" width="30" height="30" viewBox="15 137 30 30"><path d="M21.0 151.4 H37.8 M29.4 143.0 V159.8" stroke="#d4d4d4" stroke-width="2.1" fill="none"/><polygon points="40.8,151.4 36.0,155.6 36.0,147.20000000000002" fill="#d4d4d4"/><polygon points="18.0,151.4 22.799999999999997,147.20000000000002 22.799999999999997,155.6" fill="#d4d4d4"/><polygon points="29.4,162.8 25.2,158.0 33.6,158.0" fill="#d4d4d4"/><polygon points="29.4,140.0 33.6,144.8 25.2,144.8" fill="#d4d4d4"/></svg>
<svg style="left:16px;top:178px;" width="28" height="24" viewBox="16 178 28 24"><rect x="18.8" y="180.8" width="22" height="17.6" fill="none" stroke="#d4d4d4" stroke-width="1.6" stroke-dasharray="5.4 2.9" stroke-dashoffset="2.7"/></svg>
<svg style="left:43px;top:198.3px;" width="8" height="8" viewBox="43 198.3 8 8"><polygon points="49,199.3 49,204.10000000000002 44,204.10000000000002" fill="#b4b4b4"/></svg>
<svg style="left:15px;top:214px;" width="30" height="30" viewBox="15 214 30 30"><path d="M26.3 231.2 L18.6 219.6 L31.4 225 L40.4 216.8 V229.4 L30 234.2" fill="none" stroke="#d4d4d4" stroke-width="1.5" stroke-linejoin="miter"/><circle cx="27.8" cy="233" r="2.3" fill="none" stroke="#d4d4d4" stroke-width="1.4"/><path d="M25.8 234.2 L19 237.4 M28.6 235.2 L24.4 240.6" stroke="#d4d4d4" stroke-width="1.5" fill="none"/></svg>
<svg style="left:43px;top:237.4px;" width="8" height="8" viewBox="43 237.4 8 8"><polygon points="49,238.4 49,243.20000000000002 44,243.20000000000002" fill="#b4b4b4"/></svg>
<svg style="left:14px;top:255px;" width="32" height="26" viewBox="14 255 32 26"><rect x="17.4" y="259.8" width="12" height="18" rx="6" fill="none" stroke="#d4d4d4" stroke-width="1.7" stroke-dasharray="1.7 1.75"/><path d="M43.2 257.4 C42.8 261.5 41.4 265 39.4 267.6 L36.6 265.6 C38.4 262.4 40.6 259.6 43.2 257.4 Z" fill="#d4d4d4"/><path d="M36 266.4 L38.8 268.6 C38.6 272.4 34.6 275.6 27.4 275.8 C29.2 274.4 29.4 272.4 30 270.4 C30.8 267.6 33.4 266 36 266.4 Z" fill="#d4d4d4"/></svg>
<svg style="left:43px;top:275.9px;" width="8" height="8" viewBox="43 275.9 8 8"><polygon points="49,276.9 49,281.7 44,281.7" fill="#b4b4b4"/></svg>
<svg width="0" height="0" style="left:0;top:0"><defs><pattern id="chk" width="2" height="2" patternUnits="userSpaceOnUse"><rect width="2" height="2" fill="#4a4a4a"/><rect width="1" height="1" fill="#d8d8d8"/><rect x="1" y="1" width="1" height="1" fill="#d8d8d8"/></pattern></defs></svg>
<svg style="left:12px;top:292px;" width="34" height="28" viewBox="12 292 34 28"><path d="M14.6 295.8 L16.0 294.6 L17.2 296.20000000000005 C19.2 297.0 21.0 296.6 23.1 295.6 C21.900000000000002 298.6 22.1 301.6 23.1 304.1 C20.2 302.70000000000005 17.6 302.5 15.2 301.1 C14.2 300.6 14.2 298.0 14.6 295.8 Z" fill="url(#chk)" stroke="#d4d4d4" stroke-width="0.9"/><g transform="rotate(45 30 305)"><rect x="27.2" y="288.4" width="5.6" height="9" rx="2.8" fill="#d4d4d4"/><rect x="24.6" y="296.4" width="10.8" height="3.4" fill="#d4d4d4"/><rect x="27.6" y="299.4" width="4.8" height="3" fill="#d4d4d4"/><path d="M27.9 302 V318.4 a2.1 2.1 0 0 0 4.2 0 V302" fill="none" stroke="#d4d4d4" stroke-width="1.5"/></g></svg>
<svg style="left:16px;top:331px;" width="30" height="30" viewBox="16 331 30 30"><path d="M41.2 334 C40.6 339 37.6 344.6 33.4 349.4 L30 346.6 C33 341 37 336.6 41.2 334 Z" fill="#d4d4d4"/><path d="M29.2 347.4 L32.4 350.2 C32.4 354.6 27.4 357.2 19 356.8 C21.4 355.2 21.8 353 22.6 351 C23.6 348.2 26.4 346.8 29.2 347.4 Z" fill="#d4d4d4"/></svg>
<svg style="left:43px;top:353.9px;" width="8" height="8" viewBox="43 353.9 8 8"><polygon points="49,354.9 49,359.7 44,359.7" fill="#b4b4b4"/></svg>
<svg style="left:17px;top:370px;" width="26" height="28" viewBox="17 370 26 28"><circle cx="29.5" cy="377.4" r="4.8" fill="#d4d4d4"/><path d="M27.6 380 H31.4 L32.2 387 H26.8 Z" fill="#d4d4d4"/><path d="M20 392.4 V389.4 a2.6 2.6 0 0 1 2.6 -2.6 H36.4 a2.6 2.6 0 0 1 2.6 2.6 V392.4 Z" fill="#d4d4d4"/><rect x="20.4" y="394" width="18.2" height="2.1" fill="#d4d4d4"/></svg>
<svg style="left:43px;top:392.9px;" width="8" height="8" viewBox="43 392.9 8 8"><polygon points="49,393.9 49,398.7 44,398.7" fill="#b4b4b4"/></svg>
<svg style="left:14px;top:409px;" width="32" height="28" viewBox="14 409 32 28"><path d="M16.4 412.6 L26.2 420.4 M16.4 420.6 L26.4 413" stroke="#d4d4d4" stroke-width="1.2" fill="none"/><circle cx="26" cy="412.6" r="1.7" fill="none" stroke="#d4d4d4" stroke-width="1"/><circle cx="25.8" cy="420.6" r="1.7" fill="none" stroke="#d4d4d4" stroke-width="1"/><path d="M26.4 423.8 L18.8 429.6 L22 433 H27.6 L33.4 428.6" fill="none" stroke="#d4d4d4" stroke-width="1.4" stroke-linejoin="round"/><path d="M26 423.6 L34.4 414.4 L40 420.4 L33.6 429 Z" fill="#d4d4d4"/></svg>
<svg style="left:43px;top:431.9px;" width="8" height="8" viewBox="43 431.9 8 8"><polygon points="49,432.9 49,437.7 44,437.7" fill="#b4b4b4"/></svg>
<svg style="left:13px;top:449px;" width="34" height="30" viewBox="13 449 34 30"><path d="M15.2 452.59999999999997 L16.599999999999998 451.4 L17.8 453.0 C19.799999999999997 453.79999999999995 21.6 453.4 23.7 452.4 C22.5 455.4 22.7 458.4 23.7 460.9 C20.799999999999997 459.5 18.2 459.29999999999995 15.799999999999999 457.9 C14.799999999999999 457.4 14.799999999999999 454.79999999999995 15.2 452.59999999999997 Z" fill="url(#chk)" stroke="#d4d4d4" stroke-width="0.9"/><path d="M28.4 455.6 L39 465.6 L29.4 474.4 L21.2 466.2 Z" fill="none" stroke="#d4d4d4" stroke-width="1.5" stroke-linejoin="round"/><path d="M31.4 464 C29 459.4 26.4 455.6 25.2 455.4 C24.2 455.6 25.4 459.2 27.6 463" fill="none" stroke="#d4d4d4" stroke-width="1.3"/><circle cx="31.4" cy="463.6" r="1.4" fill="#d4d4d4"/><path d="M40.6 464.6 C42 467 43.2 468.6 43.2 470 a2.6 2.6 0 0 1 -5.2 0 C38 468.6 39.2 467 40.6 464.6 Z" fill="#d4d4d4"/></svg>
<svg style="left:18px;top:490px;" width="24" height="24" viewBox="18 490 24 24"><path d="M20.2 492 H39.8 V497.4 H38.4 C38.2 495.4 37.4 494.4 35.4 494.4 H31.6 V508.6 C31.6 509.8 32.4 510.2 35.8 510.4 V512 H24.2 V510.4 C27.6 510.2 28.4 509.8 28.4 508.6 V494.4 H24.6 C22.6 494.4 21.8 495.4 21.6 497.4 H20.2 Z" fill="#d4d4d4"/></svg>
<svg style="left:43px;top:509.9px;" width="8" height="8" viewBox="43 509.9 8 8"><polygon points="49,510.9 49,515.6999999999999 44,515.6999999999999" fill="#b4b4b4"/></svg>
<svg style="left:17px;top:528px;" width="28" height="26" viewBox="17 528 28 26"><path d="M33.4 530.2 L41 537.8 L38.6 540.2 L31 532.6 Z" fill="#d4d4d4"/><path d="M30.2 533.6 L37.6 541 L34.4 547 L21.4 550.6 L20.4 549.6 L24 536.6 Z" fill="none" stroke="#d4d4d4" stroke-width="1.4" stroke-linejoin="round"/><path d="M20.8 550 L28.4 542.4" stroke="#d4d4d4" stroke-width="1.3"/><circle cx="29" cy="541.8" r="1.7" fill="#d4d4d4"/></svg>
<svg style="left:43px;top:548.9px;" width="8" height="8" viewBox="43 548.9 8 8"><polygon points="49,549.9 49,554.6999999999999 44,554.6999999999999" fill="#b4b4b4"/></svg>
<svg style="left:18px;top:565px;" width="24" height="30" viewBox="18 565 24 30"><path d="M22 567.4 L37 581.6 L30.6 582.4 L34.2 590.2 L31.4 591.4 L27.8 583.8 L22 588.6 Z" fill="#d4d4d4"/></svg>
<svg style="left:43px;top:587.9px;" width="8" height="8" viewBox="43 587.9 8 8"><polygon points="49,588.9 49,593.6999999999999 44,593.6999999999999" fill="#b4b4b4"/></svg>
<svg style="left:15px;top:604px;" width="32" height="28" viewBox="15 604 32 28"><path d="M27.6 611.4 C29.6 609 32 606.4 34.2 607.6 C36 608.8 35 611.8 35.6 613 C36.6 614.4 41.4 611.6 42.6 614.2 C43.6 616.8 38.6 618.4 36.6 620 C35 621.4 38.6 625 36.4 627 C34.2 628.6 31.6 626.6 29.8 624.6 C27.6 622.6 23.6 627.6 20.4 627.2 C17.4 626.8 17.4 623.6 19.2 621.8 C21 619.8 25.4 618.6 25.4 616 C25.2 613.6 21.6 613.6 22 611.4 C22.6 609.6 25.8 609.8 27.6 611.4 Z" fill="#6e6e6e" stroke="#d4d4d4" stroke-width="1.4"/></svg>
<svg style="left:43px;top:626.9px;" width="8" height="8" viewBox="43 626.9 8 8"><polygon points="49,627.9 49,632.6999999999999 44,632.6999999999999" fill="#b4b4b4"/></svg>
<svg style="left:15px;top:642px;" width="32" height="32" viewBox="15 642 32 32"><path d="M21.4 650.6 C25 645.4 32 644.6 36.6 648.6" fill="none" stroke="#d4d4d4" stroke-width="1.3"/><polygon points="35.2,650.8 43.2,650.8 39.2,645.2" fill="#d4d4d4"/><path d="M29.2 649.6 L41.4 659.6 L32.4 668.4 L27 663 Z" fill="#d4d4d4"/><path d="M23.4 670.4 C21 668.4 19 665.4 17.4 662.4 C18.4 661 20 661.2 21 662.4 L23.4 665.2 V656.2 a1.15 1.15 0 0 1 2.3 0 V661 V654.8 a1.15 1.15 0 0 1 2.3 0 V661 V655.6 a1.15 1.15 0 0 1 2.3 0 V661.4 V658.2 a1.1 1.1 0 0 1 2.2 0 V665 C32.5 667.4 31.6 669 30.4 670.4 Z" fill="#d4d4d4" stroke="#4a4a4a" stroke-width="0.9"/></svg>
<svg style="left:43px;top:665.9px;" width="8" height="8" viewBox="43 665.9 8 8"><polygon points="49,666.9 49,671.6999999999999 44,671.6999999999999" fill="#b4b4b4"/></svg>
<svg style="left:15px;top:682px;" width="30" height="30" viewBox="15 682 30 30"><circle cx="26.6" cy="693.8" r="8.4" fill="none" stroke="#d4d4d4" stroke-width="1.9"/><path d="M32.8 700.2 L40.8 707.6" stroke="#d4d4d4" stroke-width="2.6" stroke-linecap="round"/><path d="M24.6 689.2 C27.6 688.4 30.6 690.4 31.2 693" fill="none" stroke="#d4d4d4" stroke-width="1.1"/></svg>
<svg style="left:17px;top:732px;" width="26" height="8" viewBox="17 732 26 8"><circle cx="20.8" cy="735.8" r="2.7" fill="#d4d4d4"/><circle cx="29.5" cy="735.8" r="2.7" fill="#d4d4d4"/><circle cx="38.2" cy="735.8" r="2.7" fill="#d4d4d4"/></svg>
<svg style="left:43px;top:744.3px;" width="8" height="8" viewBox="43 744.3 8 8"><polygon points="49,745.3 49,750.0999999999999 44,750.0999999999999" fill="#b4b4b4"/></svg>
<div style="left:13.5px;top:770.5px;width:10.5px;height:10px;background:#e0e0e0;"></div>
<div style="left:8px;top:765px;width:11px;height:11px;background:#111111;border:1.5px solid #d8d8d8;box-sizing:border-box;"></div>
<svg style="left:33px;top:762px;" width="18" height="20" viewBox="33 762 18 20"><path d="M38 769 H45.4 V776" fill="none" stroke="#d4d4d4" stroke-width="1.7"/><polygon points="34,769 39,764.6 39,773.4" fill="#d4d4d4"/><polygon points="45.4,780 41,775 49.8,775" fill="#d4d4d4"/></svg>
<div style="left:23px;top:802px;width:29px;height:30px;background:#3a3a3a;"></div>
<div style="left:24.5px;top:803.5px;width:26.5px;height:27px;background:#ffffff;"></div>
<div style="left:26.5px;top:806px;width:22.5px;height:23px;background:#4595ff;"></div>
<div style="left:7.5px;top:787px;width:29.5px;height:30px;background:#3a3a3a;"></div>
<div style="left:9px;top:788.5px;width:27px;height:27.5px;background:#ffffff;"></div>
<div style="left:11px;top:791px;width:23px;height:23px;background:#ffc6c6;"></div>
<svg style="left:15px;top:847px;" width="30" height="24" viewBox="15 847 30 24"><rect x="17.6" y="849.6" width="24" height="18" fill="none" stroke="#d4d4d4" stroke-width="1.2"/><circle cx="29.6" cy="858.6" r="6" fill="none" stroke="#d4d4d4" stroke-width="1.5" stroke-dasharray="1.8 1.35"/></svg>
<svg style="left:15px;top:885px;" width="30" height="24" viewBox="15 885 30 24"><rect x="17.6" y="892.6" width="17" height="13" fill="none" stroke="#d4d4d4" stroke-width="1.2"/><rect x="17.6" y="892" width="8" height="2.4" fill="#d4d4d4"/><rect x="25" y="888" width="16.6" height="13.6" fill="#535353" stroke="#d4d4d4" stroke-width="1.2"/><rect x="24.4" y="887.4" width="17.8" height="3" fill="#d4d4d4"/></svg>
<svg style="left:43px;top:905.9px;" width="8" height="8" viewBox="43 905.9 8 8"><polygon points="49,906.9 49,911.6999999999999 44,911.6999999999999" fill="#b4b4b4"/></svg>
<svg style="left:465px;top:103px;" width="14" height="14" viewBox="465 103 14 14"><path d="M467.6 105.6 L476.4 114.4 M476.4 105.6 L467.6 114.4" stroke="#b8b8b8" stroke-width="1.4" fill="none"/></svg>
<div style="left:70px;top:135px;width:5px;height:1.1px;background:#d0d0d0;"></div>
<div style="left:70px;top:138px;width:5px;height:1.1px;background:#d0d0d0;"></div>
<div style="left:70px;top:141.4px;width:5px;height:1.1px;background:#d0d0d0;"></div>
<div style="left:70px;top:144.6px;width:5px;height:1.1px;background:#d0d0d0;"></div>
<div style="left:70px;top:147.8px;width:5px;height:1.1px;background:#d0d0d0;"></div>
<svg style="left:79px;top:135px;" width="12" height="12" viewBox="79 135 12 12"><path d="M81.4 137.8 L88.8 145.4 M88.8 137.8 L81.4 145.4" stroke="#e0e0e0" stroke-width="1.2" fill="none"/></svg>
<svg style="left:106px;top:132px;" width="20" height="20" viewBox="106 132 20 20"><rect x="108.2" y="134.4" width="15.6" height="15.2" fill="none" stroke="#e0e0e0" stroke-width="1.4"/><path d="M113.4 134.4 H118 V139.8 H121.8 L115.9 146.4 L110.4 139.8 H113.4 Z" fill="#e0e0e0"/></svg>
<svg style="left:130px;top:141px;" width="12" height="7" viewBox="130 141 12 7"><polygon points="130.8,142.2 141,142.2 135.9,146.6" fill="#9a9a9a"/></svg>
<svg style="left:414px;top:132px;" width="19" height="20" viewBox="414 132 19 20"><rect x="416" y="134.2" width="13.4" height="14" fill="none" stroke="#e0e0e0" stroke-width="1.4"/><path d="M417 135 L420.6 135 L428 143 V148 H423 L417 140.4 Z" fill="#e0e0e0"/><polygon points="417.4,139.6 417.4,146.4 422.4,146.4" fill="#707070"/><polygon points="421.6,135.4 428.4,135.4 428.4,142" fill="#707070"/><rect x="424.4" y="143.4" width="6.8" height="6.8" fill="#707070" stroke="#e0e0e0" stroke-width="1.2"/><path d="M426 145 L429.6 148.6" stroke="#e0e0e0" stroke-width="1.2"/></svg>
<svg style="left:423px;top:495px;" width="12" height="12" viewBox="423 495 12 12"><rect x="424" y="504" width="1" height="1" fill="#9a9a9a"/><rect x="426" y="502" width="1" height="1" fill="#9a9a9a"/><rect x="426" y="504" width="1" height="1" fill="#9a9a9a"/><rect x="428" y="500" width="1" height="1" fill="#9a9a9a"/><rect x="428" y="502" width="1" height="1" fill="#9a9a9a"/><rect x="428" y="504" width="1" height="1" fill="#9a9a9a"/><rect x="430" y="498" width="1" height="1" fill="#9a9a9a"/><rect x="430" y="500" width="1" height="1" fill="#9a9a9a"/><rect x="430" y="502" width="1" height="1" fill="#9a9a9a"/><rect x="430" y="504" width="1" height="1" fill="#9a9a9a"/><rect x="432" y="496" width="1" height="1" fill="#9a9a9a"/><rect x="432" y="498" width="1" height="1" fill="#9a9a9a"/><rect x="432" y="500" width="1" height="1" fill="#9a9a9a"/><rect x="432" y="502" width="1" height="1" fill="#9a9a9a"/><rect x="432" y="504" width="1" height="1" fill="#9a9a9a"/></svg>
<svg style="left:99px;top:747px;" width="30" height="30" viewBox="99 747 30 30"><circle cx="113.5" cy="761.5" r="11.8" fill="#000" stroke="#cfcfcf" stroke-width="1.5"/><ellipse cx="113.5" cy="761.5" rx="3.4" ry="11.8" fill="none" stroke="#cfcfcf" stroke-width="1.3"/><ellipse cx="113.5" cy="761.5" rx="11.8" ry="4.4" fill="none" stroke="#cfcfcf" stroke-width="1.3"/></svg>
<svg style="left:134px;top:746px;" width="30" height="30" viewBox="134 746 30 30"><polygon points="146.4,759.4 146.4,754.0 143.9,754.0 148.5,749.2 153.1,754.0 150.6,754.0 150.6,759.4 156.0,759.4 156.0,756.9 160.8,761.5 156.0,766.1 156.0,763.6 150.6,763.6 150.6,769.0 153.1,769.0 148.5,773.8 143.9,769.0 146.4,769.0 146.4,763.6 141.0,763.6 141.0,766.1 136.2,761.5 141.0,756.9 141.0,759.4" fill="#000" stroke="#ededed" stroke-width="1.2" stroke-linejoin="miter"/></svg>
<svg style="left:172px;top:746px;" width="26" height="31" viewBox="172 746 26 31"><path d="M184.3 748.4 L190.4 753.4 H187.2 L188.6 766.6 H193.6 L184.3 774.2 L175 766.6 H180 L181.4 753.4 H178.2 Z" fill="#000" stroke="#ededed" stroke-width="1.2" stroke-linejoin="miter"/></svg>
<svg style="left:1490.0px;top:142.25px;" width="13" height="8.5" viewBox="1490.0 142.25 13 8.5"><path d="M1492.0 148.75 L1496.5 144.25 L1501.0 148.75" fill="none" stroke="#8a8a8a" stroke-width="1.2"/></svg>
<svg style="left:1490.0px;top:914.75px;" width="13" height="8.5" viewBox="1490.0 914.75 13 8.5"><path d="M1492.0 916.75 L1496.5 921.25 L1501.0 916.75" fill="none" stroke="#8a8a8a" stroke-width="1.2"/></svg>
<svg style="left:392.75px;top:939.0px;" width="8.5" height="16" viewBox="392.75 939.0 8.5 16"><path d="M394.75 941.0 L399.25 947 L394.75 953.0" fill="none" stroke="#c0c0c0" stroke-width="1.2"/></svg>
<svg style="left:419.75px;top:940.0px;" width="8.5" height="14" viewBox="419.75 940.0 8.5 14"><path d="M426.25 942.0 L421.75 947 L426.25 952.0" fill="none" stroke="#8a8a8a" stroke-width="1.2"/></svg>
<svg style="left:1463.75px;top:940.0px;" width="8.5" height="14" viewBox="1463.75 940.0 8.5 14"><path d="M1465.75 942.0 L1470.25 947 L1465.75 952.0" fill="none" stroke="#8a8a8a" stroke-width="1.2"/></svg>
<svg style="left:1546px;top:92px;" width="16" height="10" viewBox="1546 92 16 10"><path d="M1552 93.6 L1549 96.4 L1552 99.2 M1557.4 93.6 L1554.4 96.4 L1557.4 99.2" fill="none" stroke="#d4d4d4" stroke-width="1.2"/></svg>
<svg style="left:1896px;top:92px;" width="16" height="10" viewBox="1896 92 16 10"><path d="M1899 93.6 L1902 96.4 L1899 99.2 M1904.4 93.6 L1907.4 96.4 L1904.4 99.2" fill="none" stroke="#d4d4d4" stroke-width="1.2"/></svg>
<svg style="left:1526px;top:126px;" width="26" height="30" viewBox="1526 126 26 30"><rect x="1528.7" y="128.3" width="6.3" height="6.1" fill="none" stroke="#d4d4d4" stroke-width="1.4"/><rect x="1528.7" y="137.6" width="6.3" height="5.8" fill="none" stroke="#d4d4d4" stroke-width="1.4"/><rect x="1528" y="146.1" width="7.7" height="7.5" fill="#d4d4d4"/><polygon points="1540,130 1549,130 1545.6,133.2 1543.2,135.6 1540,139" fill="#d4d4d4"/><path d="M1546.2 132.2 C1551.6 138.6 1549.6 147.4 1540.4 150.9 C1546 146.6 1547.4 141 1543.2 136 Z" fill="#d4d4d4"/></svg>
<svg style="left:1522px;top:187px;" width="36" height="30" viewBox="1522 187 36 30"><rect x="1524" y="189.4" width="3" height="2.6" fill="#d4d4d4"/><rect x="1528.6" y="190.1" width="6.6" height="1.3" fill="#d4d4d4"/><rect x="1524" y="194.0" width="3" height="2.6" fill="#d4d4d4"/><rect x="1528.6" y="194.7" width="6.6" height="1.3" fill="#d4d4d4"/><rect x="1524" y="198.6" width="3" height="2.6" fill="#d4d4d4"/><rect x="1528.6" y="199.29999999999998" width="6.6" height="1.3" fill="#d4d4d4"/><path d="M1555.2 192.8 C1554 197 1549 202.4 1543.4 206.6 L1540.6 203.6 C1545 198 1550.4 194 1555.2 192.8 Z" fill="#d4d4d4"/><path d="M1539.6 204.4 L1542.6 207.4 C1542.2 211.6 1537 214.4 1529 214 C1531.4 212.6 1531.8 210.6 1532.6 208.6 C1533.8 205.6 1536.6 204 1539.6 204.4 Z" fill="#d4d4d4"/></svg>
<svg style="left:1520px;top:231px;" width="36" height="28" viewBox="1520 231 36 28"><path d="M1522 234.4 C1526 232.4 1531 232.6 1534.6 234 C1536.6 235 1536.6 239.4 1534.6 240.4 C1531 241.6 1526.4 241.4 1525.4 237.4 C1524.8 235.8 1523.6 235 1522 234.4 Z" fill="#d4d4d4"/><rect x="1538" y="236" width="15.6" height="2.8" rx="1" fill="#d4d4d4"/><rect x="1526" y="248" width="15" height="2.8" rx="1" fill="#d4d4d4"/><path d="M1542.6 249.4 L1551 242.2 C1554.6 246.6 1554.6 252.6 1551 257 Z" fill="#d4d4d4"/></svg>
<svg style="left:1522px;top:291px;" width="34" height="30" viewBox="1522 291 34 30"><rect x="1524" y="293.4" width="3" height="2.6" fill="#d4d4d4"/><rect x="1528.6" y="294.09999999999997" width="6.6" height="1.3" fill="#d4d4d4"/><rect x="1524" y="298.0" width="3" height="2.6" fill="#d4d4d4"/><rect x="1528.6" y="298.7" width="6.6" height="1.3" fill="#d4d4d4"/><rect x="1524" y="302.59999999999997" width="3" height="2.6" fill="#d4d4d4"/><rect x="1528.6" y="303.29999999999995" width="6.6" height="1.3" fill="#d4d4d4"/><circle cx="1542.4" cy="299.4" r="4.6" fill="#d4d4d4"/><path d="M1540.6 302 H1544.2 L1545 309.6 H1539.8 Z" fill="#d4d4d4"/><path d="M1532.6 314.8 V311.8 a2.4 2.4 0 0 1 2.4 -2.4 H1549.6 a2.4 2.4 0 0 1 2.4 2.4 V314.8 Z" fill="#d4d4d4"/><rect x="1533" y="316.2" width="18.6" height="1.9" fill="#d4d4d4"/></svg>
<svg style="left:1526px;top:352px;" width="26" height="30" viewBox="1526 352 26 30"><path d="M1528.6 375 L1536.4 357 H1538 L1545.8 375 M1531.4 368.6 H1543" fill="none" stroke="#d4d4d4" stroke-width="1.7" stroke-linejoin="miter"/><rect x="1548" y="354" width="1.2" height="25.4" fill="#d4d4d4"/></svg>
<svg style="left:1528px;top:396px;" width="22" height="28" viewBox="1528 396 22 28"><path d="M1542 398 H1536.4 a6.2 6.2 0 0 0 0 12.4 H1542 Z" fill="#d4d4d4"/><rect x="1541" y="398" width="2" height="23.4" fill="#d4d4d4"/><rect x="1545" y="398" width="2" height="23.4" fill="#d4d4d4"/><rect x="1541" y="398" width="6" height="1.6" fill="#d4d4d4"/></svg>
<svg style="left:1522px;top:456px;" width="34" height="30" viewBox="1522 456 34 30"><path d="M1549.6 459 L1551.4 460.8 L1539.6 473 L1537.8 471.2 Z" fill="#d4d4d4"/><path d="M1537.2 471 L1540 473.8 L1531.4 482.4 a2 2 0 0 1 -2.8 0 L1526.6 480.4 a2 2 0 0 1 0 -2.8 Z" fill="#d4d4d4"/><path d="M1531.6 459 C1528.6 457.6 1525.4 458.4 1524 460.8 L1528.4 462.6 L1528 465 L1525.8 465.8 L1524 464 C1524 467 1527 468.8 1530.6 468 L1537.6 471 L1538.8 469 L1532.6 464.6 C1533.6 462.6 1533.2 460.6 1531.6 459 Z" fill="#d4d4d4"/><path d="M1541.6 470.6 L1546.4 472.6" stroke="#d4d4d4" stroke-width="1.8"/><circle cx="1548.8" cy="474" r="2.6" fill="none" stroke="#d4d4d4" stroke-width="1.6"/></svg>
<svg style="left:1524px;top:517px;" width="28" height="28" viewBox="1524 517 28 28"><rect x="1526.4" y="519.4" width="19.6" height="19.6" fill="none" stroke="#bdbdbd" stroke-width="1.3"/><rect x="1530" y="523" width="19.6" height="19.6" fill="#535353" stroke="#bdbdbd" stroke-width="1.3"/><path d="M1539.6 523 H1545 V533.6 L1542.3 531.4 L1539.6 533.6 Z" fill="#bdbdbd"/></svg>
<svg style="left:1590px;top:161px;" width="30" height="27" viewBox="1590 161 30 27"><path d="M1605.0 165.7 L1595.8 174.5 L1601.0 182.7 L1604.6 180.7 L1601.1999999999998 174.89999999999998 L1607.0 167.7 Z" fill="#8c8c8c"/><path d="M1602.0 168.7 L1595.8 174.5 L1599.0 179.5 L1600.1999999999998 174.89999999999998 Z" fill="#a8a8a8"/><polygon points="1608.4,166.0 1609.8,171.0 1614.3,171.2 1611.3,175.3 1613.4,180.0 1609.0,178.9 1606.6,183.4 1605.2,178.4 1600.7,178.2 1603.7,174.1 1601.6,169.4 1606.0,170.5" fill="#d4d4d4"/></svg>
<svg style="left:1629px;top:162px;" width="22" height="24" viewBox="1629 162 22 24"><path d="M1637.6 165.6 L1644.4 165 L1645.4 177.4 L1648 179.6 L1640 182.6 L1631.6 176 Z" fill="none" stroke="#d4d4d4" stroke-width="1.3" stroke-linejoin="round"/><path d="M1637.6 165.6 L1640.6 168.4 L1644.8 167.6 M1640.6 168.4 C1638.6 172.6 1638.6 177.6 1640 182.6 M1634.6 170.6 L1640 182.4" fill="none" stroke="#d4d4d4" stroke-width="1.1"/><path d="M1638 165.8 L1644.4 165.2 L1644.6 167.6 L1640.6 168.4 Z" fill="#d4d4d4"/></svg>
<svg style="left:1665px;top:163px;" width="23" height="22" viewBox="1665 163 23 22"><path d="M1670.4 181.6 C1670.8 174 1675.6 169.6 1683.6 169.2" fill="none" stroke="#d4d4d4" stroke-width="4.2"/><path d="M1667.6 165.4 L1671.6 169.4" stroke="#d4d4d4" stroke-width="1.5"/><polygon points="1673.2,166 1673.2,171 1668.2,171" fill="#d4d4d4"/><path d="M1685 182.6 L1681 178.6" stroke="#d4d4d4" stroke-width="1.5"/><polygon points="1679.4,182 1679.4,177 1684.4,177" fill="#d4d4d4"/></svg>
<svg style="left:1701px;top:162px;" width="23" height="23" viewBox="1701 162 23 23"><path d="M1712 169.4 L1718 172.4 V179.4 L1712 182.6 L1706 179.4 V172.4 Z M1706 172.4 L1712 175.6 L1718 172.4 M1712 175.6 V182.6" fill="none" stroke="#d4d4d4" stroke-width="1.3" stroke-linejoin="round"/><path d="M1712 164.6 V175 M1706 179.4 L1703.2 181.4 M1718 179.4 L1720.8 181.4" stroke="#d4d4d4" stroke-width="1.3" fill="none"/></svg>
<svg style="left:1578px;top:204px;" width="15" height="15" viewBox="1578 204 15 15"><path d="M1581.2 211.6 L1584.4 214.8 L1590 208.4" fill="none" stroke="#222" stroke-width="2.1"/></svg>
<svg style="left:1578px;top:232px;" width="15" height="15" viewBox="1578 232 15 15"><path d="M1581.2 239.6 L1584.4 242.8 L1590 236.4" fill="none" stroke="#222" stroke-width="2.1"/></svg>
<svg style="left:1900.0px;top:212.25px;" width="13" height="8.5" viewBox="1900.0 212.25 13 8.5"><path d="M1902.0 218.75 L1906.5 214.25 L1911.0 218.75" fill="none" stroke="#8a8a8a" stroke-width="1.2"/></svg>
<svg style="left:1900.0px;top:475.75px;" width="13" height="8.5" viewBox="1900.0 475.75 13 8.5"><path d="M1902.0 477.75 L1906.5 482.25 L1911.0 477.75" fill="none" stroke="#8a8a8a" stroke-width="1.2"/></svg>
<svg style="left:1581px;top:303px;" width="67" height="66" viewBox="1581 303 67 66"><polygon points="1588,308.4 1629.4,307 1629.4,353.4 1589,349" fill="#00a3a3"/><polygon points="1629.4,307 1636.4,308.4 1635.4,347.4 1629.4,353.4" fill="#6a6a6a"/><polygon points="1619,307.4 1629.4,307 1629.4,308.6 1619,308.6" fill="#008f8f"/></svg>
<svg style="left:1653.3999999999999px;top:334.29999999999995px;" width="12.4" height="8.2" viewBox="1653.3999999999999 334.29999999999995 12.4 8.2"><path d="M1655.3999999999999 336.29999999999995 L1659.6 340.5 L1663.8 336.29999999999995" fill="none" stroke="#c0c0c0" stroke-width="1.2"/></svg>
<svg style="left:1727px;top:302px;" width="31" height="31" viewBox="1727 302 31 31"><rect x="1729.1" y="304.1" width="5.2" height="5.2" fill="none" stroke="#777" stroke-width="1"/><rect x="1729.1" y="314.5" width="5.2" height="5.2" fill="none" stroke="#777" stroke-width="1"/><rect x="1729.1" y="324.9" width="5.2" height="5.2" fill="none" stroke="#777" stroke-width="1"/><rect x="1739.5" y="304.1" width="5.2" height="5.2" fill="none" stroke="#777" stroke-width="1"/><rect x="1739" y="314" width="8" height="8" fill="#dcdcdc"/><rect x="1739.5" y="324.9" width="5.2" height="5.2" fill="none" stroke="#777" stroke-width="1"/><rect x="1749.9" y="304.1" width="5.2" height="5.2" fill="none" stroke="#777" stroke-width="1"/><rect x="1749.9" y="314.5" width="5.2" height="5.2" fill="none" stroke="#777" stroke-width="1"/><rect x="1749.9" y="324.9" width="5.2" height="5.2" fill="none" stroke="#777" stroke-width="1"/><path d="M1736 306.7 H1739 M1746.4 306.7 H1749.4 M1736 327.5 H1739 M1746.4 327.5 H1749.4 M1731.7 311.2 V314 M1731.7 321.59999999999997 V324.4 M1752.5 311.2 V314 M1752.5 321.59999999999997 V324.4 " stroke="#777" stroke-width="1" fill="none"/></svg>
<svg style="left:1870.2px;top:401.20000000000005px;" width="13.6" height="8.8" viewBox="1870.2 401.20000000000005 13.6 8.8"><path d="M1872.2 403.20000000000005 L1877 408.0 L1881.8 403.20000000000005" fill="none" stroke="#c8c8c8" stroke-width="1.3"/></svg>
<svg style="left:1812px;top:467px;" width="20" height="20" viewBox="1812 467 20 20"><path d="M1821.8 469.4 L1829 476.6 V482.4 a2 2 0 0 1 -2 2 H1816.6 a2 2 0 0 1 -2 -2 V476.6 Z" fill="#f2f2f2" stroke="#3a3a3a" stroke-width="0.8"/></svg>
<svg style="left:1812px;top:503px;" width="22" height="22" viewBox="1812 503 22 22"><rect x="1813.8" y="504.8" width="18.4" height="17.4" fill="none" stroke="#d4d4d4" stroke-width="1.6"/><path d="M1823.0 509.0 L1828.0 511.6 V517.2 L1823.0 520.0 L1818.0 517.2 V511.6 Z" fill="#d4d4d4"/><path d="M1818.0 511.6 L1823.0 514.4 L1828.0 511.6 M1823.0 514.4 V520.0" stroke="#535353" stroke-width="1.2" fill="none"/></svg>
<svg style="left:1857px;top:503px;" width="19" height="21" viewBox="1857 503 19 21"><rect x="1859" y="507.20000000000005" width="14.6" height="1.6" fill="#858585"/><rect x="1863.6" y="504.6" width="5.4" height="2.6" rx="1" fill="none" stroke="#858585" stroke-width="1.2"/><path d="M1860.6 509.6 H1872 V520.2 a1.6 1.6 0 0 1 -1.6 1.6 H1862.2 a1.6 1.6 0 0 1 -1.6 -1.6 Z" fill="none" stroke="#858585" stroke-width="1.4"/><path d="M1864 511.6 V519.6 M1866.3 511.6 V519.6 M1868.6 511.6 V519.6" stroke="#858585" stroke-width="1.2"/></svg>
<svg width="0" height="0" style="left:0;top:0"><defs><pattern id="chk2" width="2.6" height="2.6" patternUnits="userSpaceOnUse"><rect width="2.6" height="2.6" fill="#d8d8d8"/><rect width="1.5" height="1.5" fill="#4c4c4c"/><rect x="1.3" y="1.3" width="1.5" height="1.5" fill="#4c4c4c"/></pattern></defs></svg>
<svg style="left:1679px;top:596px;" width="22" height="20" viewBox="1679 596 22 20"><rect x="1681.6" y="598.2" width="3.2" height="3.2" fill="none" stroke="#d4d4d4" stroke-width="1.2"/><path d="M1685.4 599.8000000000001 H1699.4 M1683.2 602.0 V612.2 H1690 M1683.2 606.0 H1690 M1694 606.0 H1699.4 M1694 612.2 H1699.4" stroke="#d4d4d4" stroke-width="1.3" fill="none"/><rect x="1690.4" y="604.2" width="3.4" height="3.6" fill="none" stroke="#d4d4d4" stroke-width="1.2"/><rect x="1690.4" y="610.4" width="3.4" height="3.6" fill="none" stroke="#d4d4d4" stroke-width="1.2"/></svg>
<svg style="left:1717px;top:596px;" width="18" height="20" viewBox="1717 596 18 20"><path d="M1718.6 600.4 C1718.6 596.4 1733.1 596.4 1733.1 600.4 V611.6 C1733.1 615.6 1718.6 615.6 1718.6 611.6 Z" fill="#d4d4d4"/><ellipse cx="1725.85" cy="600.3" rx="5.65" ry="1.7" fill="#535353"/><rect x="1721.4" y="604.2" width="2" height="2.1" fill="#535353"/><rect x="1721.4" y="607.6" width="2" height="2.1" fill="#535353"/><rect x="1721.4" y="611" width="2" height="2.1" fill="#535353"/><rect x="1724.6" y="604.2" width="2" height="2.1" fill="#535353"/><rect x="1724.6" y="607.6" width="2" height="2.1" fill="#535353"/><rect x="1724.6" y="611" width="2" height="2.1" fill="#535353"/><rect x="1727.8" y="604.2" width="2" height="2.1" fill="#535353"/><rect x="1727.8" y="607.6" width="2" height="2.1" fill="#535353"/><rect x="1727.8" y="611" width="2" height="2.1" fill="#535353"/></svg>
<svg style="left:1753px;top:595px;" width="20" height="20" viewBox="1753 595 20 20"><path d="M1767.0 603.2 a3 3.2 0 0 1 0 6.4 Z" fill="#d4d4d4"/><path d="M1756.6 596 C1757.6 598.4 1758.6 599.2 1760.6 599.2 C1763.6 599.2 1765.6 598.6 1767.1999999999998 597.8 C1766.1999999999998 602 1766.3999999999999 608 1768.1999999999998 614 C1765.6 612.6 1762.6 612.4 1759.6 612.2 C1757.1999999999998 611.8 1755.8 610 1755.1999999999998 607 C1754.6 603 1755.1999999999998 599 1756.6 596 Z" fill="url(#chk2)" stroke="#d4d4d4" stroke-width="1.2"/></svg>
<svg style="left:1790px;top:596px;" width="16" height="20" viewBox="1790 596 16 20"><path d="M1798.1 597 a6.5 6.5 0 0 1 6.5 6.5 c0 2.6 -1.6 4 -2.6 5.8 v1.4 h-7.8 v-1.4 c-1 -1.8 -2.6 -3.2 -2.6 -5.8 a6.5 6.5 0 0 1 6.5 -6.5 Z" fill="#d4d4d4"/><path d="M1794.3999999999999 611.8 H1801.8 L1798.1 614.8 Z" fill="#d4d4d4"/></svg>
<svg style="left:1900.0px;top:640.75px;" width="13" height="8.5" viewBox="1900.0 640.75 13 8.5"><path d="M1902.0 647.25 L1906.5 642.75 L1911.0 647.25" fill="none" stroke="#8a8a8a" stroke-width="1.2"/></svg>
<svg style="left:1900.0px;top:946.75px;" width="13" height="8.5" viewBox="1900.0 946.75 13 8.5"><path d="M1902.0 948.75 L1906.5 953.25 L1911.0 948.75" fill="none" stroke="#8a8a8a" stroke-width="1.2"/></svg>
<svg style="left:1577px;top:636.4px;" width="23" height="16" viewBox="1577 636.4 23 16"><path d="M1578.9 644.4 C1582.9 636.8 1594.1 636.8 1598.1 644.4 C1594.1 652.0 1582.9 652.0 1578.9 644.4 Z" fill="#9a9a9a"/><circle cx="1588.5" cy="644.4" r="3.9" fill="#505050"/><circle cx="1589.7" cy="643.0" r="1" fill="#9a9a9a"/></svg>
<svg style="left:1577px;top:666.48px;" width="23" height="16" viewBox="1577 666.48 23 16"><path d="M1578.9 674.48 C1582.9 666.88 1594.1 666.88 1598.1 674.48 C1594.1 682.08 1582.9 682.08 1578.9 674.48 Z" fill="#9a9a9a"/><circle cx="1588.5" cy="674.48" r="3.9" fill="#505050"/><circle cx="1589.7" cy="673.08" r="1" fill="#9a9a9a"/></svg>
<svg style="left:1577px;top:696.56px;" width="23" height="16" viewBox="1577 696.56 23 16"><path d="M1578.9 704.56 C1582.9 696.9599999999999 1594.1 696.9599999999999 1598.1 704.56 C1594.1 712.16 1582.9 712.16 1578.9 704.56 Z" fill="#9a9a9a"/><circle cx="1588.5" cy="704.56" r="3.9" fill="#505050"/><circle cx="1589.7" cy="703.16" r="1" fill="#9a9a9a"/></svg>
<svg style="left:1577px;top:726.64px;" width="23" height="16" viewBox="1577 726.64 23 16"><path d="M1578.9 734.64 C1582.9 727.04 1594.1 727.04 1598.1 734.64 C1594.1 742.24 1582.9 742.24 1578.9 734.64 Z" fill="#e4e4e4"/><circle cx="1588.5" cy="734.64" r="3.9" fill="#505050"/><circle cx="1589.7" cy="733.24" r="1" fill="#e4e4e4"/></svg>
<svg style="left:1577px;top:756.7199999999999px;" width="23" height="16" viewBox="1577 756.7199999999999 23 16"><path d="M1578.9 764.7199999999999 C1582.9 757.1199999999999 1594.1 757.1199999999999 1598.1 764.7199999999999 C1594.1 772.3199999999999 1582.9 772.3199999999999 1578.9 764.7199999999999 Z" fill="#e4e4e4"/><circle cx="1588.5" cy="764.7199999999999" r="3.9" fill="#505050"/><circle cx="1589.7" cy="763.3199999999999" r="1" fill="#e4e4e4"/></svg>
<svg style="left:1577px;top:786.8px;" width="23" height="16" viewBox="1577 786.8 23 16"><path d="M1578.9 794.8 C1582.9 787.1999999999999 1594.1 787.1999999999999 1598.1 794.8 C1594.1 802.4 1582.9 802.4 1578.9 794.8 Z" fill="#e4e4e4"/><circle cx="1588.5" cy="794.8" r="3.9" fill="#505050"/><circle cx="1589.7" cy="793.4" r="1" fill="#e4e4e4"/></svg>
<svg style="left:1577px;top:816.88px;" width="23" height="16" viewBox="1577 816.88 23 16"><path d="M1578.9 824.88 C1582.9 817.28 1594.1 817.28 1598.1 824.88 C1594.1 832.48 1582.9 832.48 1578.9 824.88 Z" fill="#e4e4e4"/><circle cx="1588.5" cy="824.88" r="3.9" fill="#505050"/><circle cx="1589.7" cy="823.48" r="1" fill="#e4e4e4"/></svg>
<svg style="left:1577px;top:846.9599999999999px;" width="23" height="16" viewBox="1577 846.9599999999999 23 16"><path d="M1578.9 854.9599999999999 C1582.9 847.3599999999999 1594.1 847.3599999999999 1598.1 854.9599999999999 C1594.1 862.56 1582.9 862.56 1578.9 854.9599999999999 Z" fill="#e4e4e4"/><circle cx="1588.5" cy="854.9599999999999" r="3.9" fill="#505050"/><circle cx="1589.7" cy="853.56" r="1" fill="#e4e4e4"/></svg>
<svg style="left:1577px;top:877.04px;" width="23" height="16" viewBox="1577 877.04 23 16"><path d="M1578.9 885.04 C1582.9 877.4399999999999 1594.1 877.4399999999999 1598.1 885.04 C1594.1 892.64 1582.9 892.64 1578.9 885.04 Z" fill="#e4e4e4"/><circle cx="1588.5" cy="885.04" r="3.9" fill="#505050"/><circle cx="1589.7" cy="883.64" r="1" fill="#e4e4e4"/></svg>
<svg style="left:1577px;top:907.12px;" width="23" height="16" viewBox="1577 907.12 23 16"><path d="M1578.9 915.12 C1582.9 907.52 1594.1 907.52 1598.1 915.12 C1594.1 922.72 1582.9 922.72 1578.9 915.12 Z" fill="#e4e4e4"/><circle cx="1588.5" cy="915.12" r="3.9" fill="#505050"/><circle cx="1589.7" cy="913.72" r="1" fill="#e4e4e4"/></svg>
<svg style="left:1577px;top:937.1999999999999px;" width="23" height="16" viewBox="1577 937.1999999999999 23 16"><path d="M1578.9 945.1999999999999 C1582.9 937.5999999999999 1594.1 937.5999999999999 1598.1 945.1999999999999 C1594.1 952.8 1582.9 952.8 1578.9 945.1999999999999 Z" fill="#9a9a9a"/><circle cx="1588.5" cy="945.1999999999999" r="3.9" fill="#505050"/><circle cx="1589.7" cy="943.8" r="1" fill="#9a9a9a"/></svg>
<svg style="left:1605px;top:634.0px;" width="24" height="24" viewBox="1605 634.0 24 24"><circle cx="1617" cy="642.6" r="2.2" fill="#d4d4d4"/><path d="M1620.8 642.6 L1623.0 642.6" stroke="#d4d4d4" stroke-width="1.4"/><path d="M1613.2 642.6 L1611.0 642.6" stroke="#d4d4d4" stroke-width="1.4"/><path d="M1614.3 639.9 L1612.8 638.4" stroke="#d4d4d4" stroke-width="1.4"/><path d="M1617.0 638.8 L1617.0 636.6" stroke="#d4d4d4" stroke-width="1.4"/><path d="M1619.7 639.9 L1621.2 638.4" stroke="#d4d4d4" stroke-width="1.4"/><path d="M1617 646.4 L1627 651.4 L1617 656.2 L1607 651.4 Z" fill="#d4d4d4"/><path d="M1617 647.0 V651.6" stroke="#535353" stroke-width="1.6"/><polygon points="1613.6,650.4 1620.4,650.4 1617,653.6" fill="#535353"/></svg>
<svg style="left:1606px;top:664.08px;" width="22" height="20" viewBox="1606 664.08 22 20"><rect x="1608.1999999999998" y="666.2800000000001" width="3.2" height="3.2" fill="none" stroke="#d4d4d4" stroke-width="1.2"/><path d="M1612.0 667.8800000000001 H1626.0 M1609.8 670.08 V680.2800000000001 H1616.6 M1609.8 674.08 H1616.6 M1620.6 674.08 H1626.0 M1620.6 680.2800000000001 H1626.0" stroke="#d4d4d4" stroke-width="1.3" fill="none"/><rect x="1617.0" y="672.2800000000001" width="3.4" height="3.6" fill="none" stroke="#d4d4d4" stroke-width="1.2"/><rect x="1617.0" y="678.48" width="3.4" height="3.6" fill="none" stroke="#d4d4d4" stroke-width="1.2"/></svg>
<svg style="left:1630px;top:698.16px;" width="23" height="15" viewBox="1630 698.16 23 15"><rect x="1631" y="700.16" width="14.6" height="12" rx="1.6" fill="#d4d4d4"/><polygon points="1646,706.16 1651.2,701.56 1651.2,710.76" fill="#d4d4d4"/></svg>
<svg style="left:1628px;top:722.24px;" width="26" height="26" viewBox="1628 722.24 26 26"><circle cx="1640" cy="734.64" r="3.7" fill="#d4d4d4"/><path d="M1645.6 734.6 L1648.2 734.6" stroke="#d4d4d4" stroke-width="1.4"/><path d="M1640.0 740.2 L1640.0 742.8" stroke="#d4d4d4" stroke-width="1.4"/><path d="M1636.0 738.6 L1634.2 740.4" stroke="#d4d4d4" stroke-width="1.4"/><path d="M1634.4 734.6 L1631.8 734.6" stroke="#d4d4d4" stroke-width="1.4"/><path d="M1636.0 730.7 L1634.2 728.8" stroke="#d4d4d4" stroke-width="1.4"/><path d="M1640.0 729.0 L1640.0 726.4" stroke="#d4d4d4" stroke-width="1.4"/><path d="M1644.0 730.7 L1645.8 728.8" stroke="#d4d4d4" stroke-width="1.4"/><path d="M1643.6 738.24 L1647.4 742.04" stroke="#d4d4d4" stroke-width="1.3"/><polygon points="1648.6,739.64 1648.6,743.24 1645,743.24" fill="#d4d4d4"/></svg>
<svg style="left:1611.4px;top:759.92px;" width="16" height="10" viewBox="1611.4 759.92 16 10"><path d="M1613.4 761.92 L1619.4 767.92 L1625.4 761.92" fill="none" stroke="#d0d0d0" stroke-width="1.2"/></svg>
<svg style="left:1628px;top:754.3199999999999px;" width="26" height="22" viewBox="1628 754.3199999999999 26 22"><path d="M1641.432 757.0999999999999 L1632.416 765.7239999999999 L1637.512 773.76 L1641.04 771.8 L1637.708 766.116 L1643.392 759.06 Z" fill="#8c8c8c"/><path d="M1638.492 760.04 L1632.416 765.7239999999999 L1635.552 770.6239999999999 L1636.728 766.116 Z" fill="#a8a8a8"/><polygon points="1644.7,757.4 1646.2,762.3 1650.5,762.5 1647.6,766.5 1649.7,771.1 1645.4,770.1 1643.0,774.5 1641.6,769.5 1637.2,769.3 1640.1,765.4 1638.1,760.7 1642.4,761.8" fill="#d4d4d4"/></svg>
<svg style="left:1656px;top:784.4px;" width="19" height="21" viewBox="1656 784.4 19 21"><path d="M1670.0 793.0 a3 3.2 0 0 1 0 6.4 Z" fill="#d4d4d4"/><path d="M1659.6 785.8 C1660.6 788.1999999999999 1661.6 789.0 1663.6 789.0 C1666.6 789.0 1668.6 788.4 1670.1999999999998 787.5999999999999 C1669.1999999999998 791.8 1669.3999999999999 797.8 1671.1999999999998 803.8 C1668.6 802.4 1665.6 802.1999999999999 1662.6 802.0 C1660.1999999999998 801.5999999999999 1658.8 799.8 1658.1999999999998 796.8 C1657.6 792.8 1658.1999999999998 788.8 1659.6 785.8 Z" fill="url(#chk2)" stroke="#d4d4d4" stroke-width="1.2"/></svg>
<svg style="left:1656px;top:814.48px;" width="19" height="21" viewBox="1656 814.48 19 21"><path d="M1670.0 823.08 a3 3.2 0 0 1 0 6.4 Z" fill="#d4d4d4"/><path d="M1659.6 815.88 C1660.6 818.28 1661.6 819.08 1663.6 819.08 C1666.6 819.08 1668.6 818.48 1670.1999999999998 817.68 C1669.1999999999998 821.88 1669.3999999999999 827.88 1671.1999999999998 833.88 C1668.6 832.48 1665.6 832.28 1662.6 832.08 C1660.1999999999998 831.68 1658.8 829.88 1658.1999999999998 826.88 C1657.6 822.88 1658.1999999999998 818.88 1659.6 815.88 Z" fill="url(#chk2)" stroke="#d4d4d4" stroke-width="1.2"/></svg>
<svg style="left:1656px;top:844.56px;" width="19" height="21" viewBox="1656 844.56 19 21"><path d="M1670.0 853.16 a3 3.2 0 0 1 0 6.4 Z" fill="#d4d4d4"/><path d="M1659.6 845.9599999999999 C1660.6 848.3599999999999 1661.6 849.16 1663.6 849.16 C1666.6 849.16 1668.6 848.56 1670.1999999999998 847.7599999999999 C1669.1999999999998 851.9599999999999 1669.3999999999999 857.9599999999999 1671.1999999999998 863.9599999999999 C1668.6 862.56 1665.6 862.3599999999999 1662.6 862.16 C1660.1999999999998 861.7599999999999 1658.8 859.9599999999999 1658.1999999999998 856.9599999999999 C1657.6 852.9599999999999 1658.1999999999998 848.9599999999999 1659.6 845.9599999999999 Z" fill="url(#chk2)" stroke="#d4d4d4" stroke-width="1.2"/></svg>
<svg style="left:1656px;top:874.64px;" width="19" height="21" viewBox="1656 874.64 19 21"><path d="M1670.0 883.24 a3 3.2 0 0 1 0 6.4 Z" fill="#d4d4d4"/><path d="M1659.6 876.04 C1660.6 878.4399999999999 1661.6 879.24 1663.6 879.24 C1666.6 879.24 1668.6 878.64 1670.1999999999998 877.8399999999999 C1669.1999999999998 882.04 1669.3999999999999 888.04 1671.1999999999998 894.04 C1668.6 892.64 1665.6 892.4399999999999 1662.6 892.24 C1660.1999999999998 891.8399999999999 1658.8 890.04 1658.1999999999998 887.04 C1657.6 883.04 1658.1999999999998 879.04 1659.6 876.04 Z" fill="url(#chk2)" stroke="#d4d4d4" stroke-width="1.2"/></svg>
<svg style="left:1656px;top:904.72px;" width="19" height="21" viewBox="1656 904.72 19 21"><path d="M1670.0 913.32 a3 3.2 0 0 1 0 6.4 Z" fill="#d4d4d4"/><path d="M1659.6 906.12 C1660.6 908.52 1661.6 909.32 1663.6 909.32 C1666.6 909.32 1668.6 908.72 1670.1999999999998 907.92 C1669.1999999999998 912.12 1669.3999999999999 918.12 1671.1999999999998 924.12 C1668.6 922.72 1665.6 922.52 1662.6 922.32 C1660.1999999999998 921.92 1658.8 920.12 1658.1999999999998 917.12 C1657.6 913.12 1658.1999999999998 909.12 1659.6 906.12 Z" fill="url(#chk2)" stroke="#d4d4d4" stroke-width="1.2"/></svg>
<svg style="left:1655px;top:934.8px;" width="21" height="21" viewBox="1655 934.8 21 21"><circle cx="1665.4" cy="945.4" r="8.4" fill="none" stroke="#d4d4d4" stroke-width="1.5"/><circle cx="1665.4" cy="945.4" r="4.4" fill="#8a8a8a" stroke="#d4d4d4" stroke-width="1.4"/></svg>
<svg style="left:1646px;top:977px;" width="26" height="25" viewBox="1646 977 26 25"><path d="M1647.6 982.0 C1647.6 978.0 1662.1 978.0 1662.1 982.0 V993.2 C1662.1 997.2 1647.6 997.2 1647.6 993.2 Z" fill="#d4d4d4"/><ellipse cx="1654.85" cy="981.9" rx="5.65" ry="1.7" fill="#535353"/><rect x="1650.4" y="985.8000000000001" width="2" height="2.1" fill="#535353"/><rect x="1650.4" y="989.2" width="2" height="2.1" fill="#535353"/><rect x="1650.4" y="992.6" width="2" height="2.1" fill="#535353"/><rect x="1653.6" y="985.8000000000001" width="2" height="2.1" fill="#535353"/><rect x="1653.6" y="989.2" width="2" height="2.1" fill="#535353"/><rect x="1653.6" y="992.6" width="2" height="2.1" fill="#535353"/><rect x="1656.8" y="985.8000000000001" width="2" height="2.1" fill="#535353"/><rect x="1656.8" y="989.2" width="2" height="2.1" fill="#535353"/><rect x="1656.8" y="992.6" width="2" height="2.1" fill="#535353"/><polygon points="1664.6,997 1670.6,997 1667.6,1000.2" fill="#d4d4d4"/></svg>
<svg style="left:1690px;top:977px;" width="26" height="25" viewBox="1690 977 26 25"><path d="M1698.1 979 a6.5 6.5 0 0 1 6.5 6.5 c0 2.6 -1.6 4 -2.6 5.8 v1.4 h-7.8 v-1.4 c-1 -1.8 -2.6 -3.2 -2.6 -5.8 a6.5 6.5 0 0 1 6.5 -6.5 Z" fill="#d4d4d4"/><path d="M1694.3999999999999 993.8 H1701.8 L1698.1 996.8 Z" fill="#d4d4d4"/><polygon points="1707.6,997 1713.6,997 1710.6,1000.2" fill="#d4d4d4"/></svg>
<svg style="left:1731px;top:978px;" width="22" height="21" viewBox="1731 978 22 21"><rect x="1732.8" y="979.8" width="18.4" height="17.4" fill="none" stroke="#d4d4d4" stroke-width="1.6"/><path d="M1742.0 984.0 L1747.0 986.6 V992.2 L1742.0 995.0 L1737.0 992.2 V986.6 Z" fill="#d4d4d4"/><path d="M1737.0 986.6 L1742.0 989.4 L1747.0 986.6 M1742.0 989.4 V995.0" stroke="#535353" stroke-width="1.2" fill="none"/></svg>
<svg style="left:1775px;top:977px;" width="21" height="21" viewBox="1775 977 21 21"><rect x="1781.4" y="978" width="4.4" height="1.4" fill="#3a3a3a"/><path d="M1782 979.6 H1785.2 L1784.2 986 H1783 Z" fill="#9a9a9a"/><path d="M1783.6 986 V991.6" stroke="#9a9a9a" stroke-width="1"/><rect x="1776" y="990.4" width="7" height="1.6" fill="#3a3a3a"/><rect x="1776" y="992" width="7" height="4.4" fill="#9a9a9a"/><rect x="1783" y="993.2" width="11" height="1.4" fill="#3a3a3a"/><rect x="1783" y="994.6" width="11" height="1.8" fill="#9a9a9a"/></svg>
<svg style="left:1819px;top:977px;" width="23" height="22" viewBox="1819 977 23 22"><rect x="1825.4" y="978" width="4.4" height="1.4" fill="#3a3a3a"/><path d="M1826 979.6 H1829.2 L1828.2 986 H1827 Z" fill="#9a9a9a"/><path d="M1827.6 986 V991.6" stroke="#9a9a9a" stroke-width="1"/><rect x="1820" y="990.4" width="7" height="1.6" fill="#3a3a3a"/><rect x="1820" y="992" width="7" height="4.4" fill="#9a9a9a"/><rect x="1827" y="993.2" width="5" height="1.4" fill="#3a3a3a"/><rect x="1827" y="994.6" width="5" height="1.8" fill="#9a9a9a"/><circle cx="1836" cy="992.6" r="3.6" fill="#535353" stroke="#9a9a9a" stroke-width="1.1"/><path d="M1834.4 991 L1837.6 994.2 M1837.6 991 L1834.4 994.2" stroke="#9a9a9a" stroke-width="1.1"/></svg>
<svg style="left:1863px;top:978px;" width="19" height="21" viewBox="1863 978 19 21"><rect x="1864.6" y="982.0" width="14.6" height="1.6" fill="#d4d4d4"/><rect x="1869.1999999999998" y="979.4" width="5.4" height="2.6" rx="1" fill="none" stroke="#d4d4d4" stroke-width="1.2"/><path d="M1866.1999999999998 984.4 H1877.6 V995.0 a1.6 1.6 0 0 1 -1.6 1.6 H1867.8 a1.6 1.6 0 0 1 -1.6 -1.6 Z" fill="none" stroke="#d4d4d4" stroke-width="1.4"/><path d="M1869.6 986.4 V994.4 M1871.8999999999999 986.4 V994.4 M1874.1999999999998 986.4 V994.4" stroke="#d4d4d4" stroke-width="1.2"/></svg>
</div></body></html>
